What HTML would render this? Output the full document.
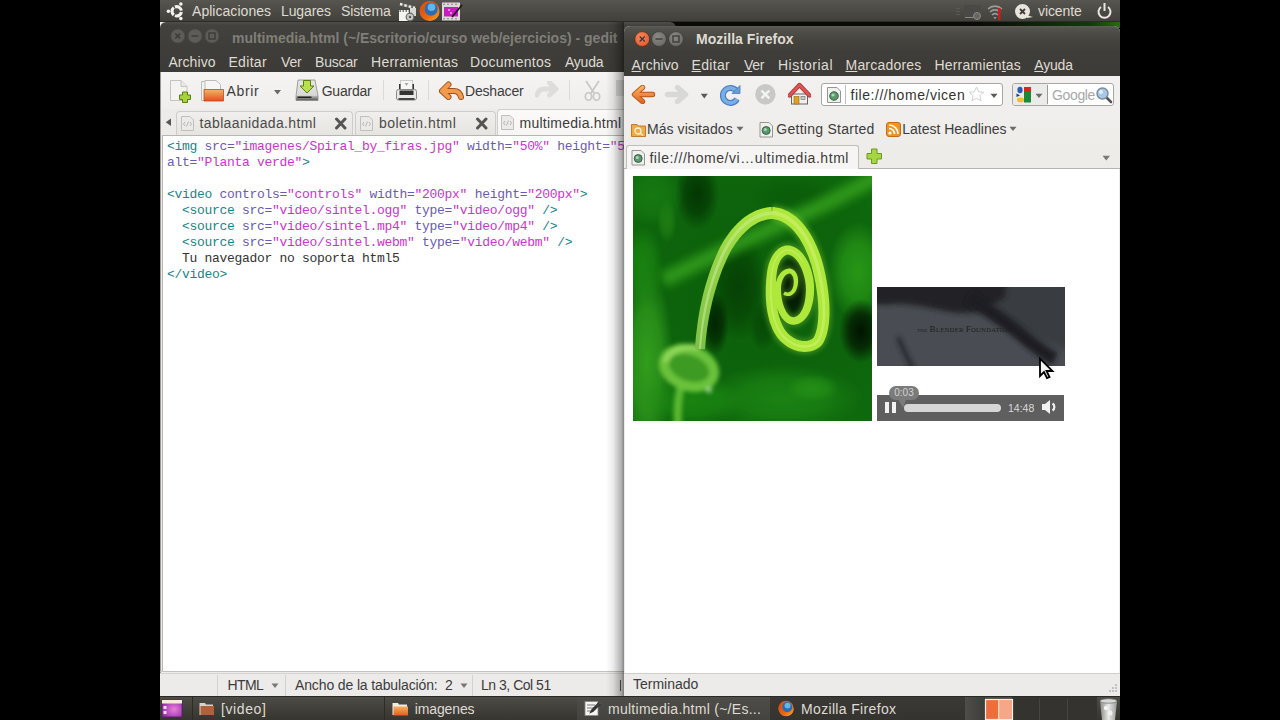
<!DOCTYPE html>
<html><head><meta charset="utf-8">
<style>
*{margin:0;padding:0;box-sizing:border-box}
html,body{width:1280px;height:720px;overflow:hidden;background:#000}
body{position:relative;font-family:"Liberation Sans",sans-serif}
.a{position:absolute}
.t{position:absolute;font-size:14px;line-height:14px;white-space:pre;font-family:"Liberation Sans",sans-serif}
.m{position:absolute;font-family:"Liberation Mono",monospace;font-size:13px;letter-spacing:-0.3px;line-height:16px;white-space:pre}
.mt{color:#dfdbd2}
.tg{color:#1a8486}
.at{color:#6a5bb0}
.st{color:#cc33cc}
.tx{color:#333}
u{text-decoration:underline;text-decoration-thickness:1px;text-underline-offset:0.5px}
</style></head><body>
<!-- desktop wallpaper strip -->
<div class="a" style="left:160px;top:22px;width:960px;height:6px;background:linear-gradient(90deg,#0a0a08 0,#0a0a08 85%,#123a0a 97%,#2a6a14)"></div>

<!-- TOP PANEL -->
<div class="a" style="left:160px;top:0;width:960px;height:22px;background:linear-gradient(#57554f,#403f3a)"></div>
<div class="a" style="left:160px;top:21px;width:960px;height:1px;background:#2c2b28"></div>
<svg class="a" style="left:162px;top:1px" width="26" height="21" viewBox="0 0 26 21">
<g fill="none" stroke="#f4f2ee" stroke-width="3.1"><path d="M11.81,14.00 A4.7,4.7 0 0 1 11.81,6.60"/><path d="M12.94,5.94 A4.7,4.7 0 0 1 19.35,9.65"/><path d="M19.35,10.95 A4.7,4.7 0 0 1 12.94,14.66"/></g>
<g fill="#f4f2ee"><circle cx="6.40" cy="10.30" r="1.75"/><circle cx="18.85" cy="3.11" r="1.75"/><circle cx="18.85" cy="17.49" r="1.75"/></g>
</svg>
<svg class="a" style="left:398px;top:2px" width="20" height="20" viewBox="0 0 20 20">
<path d="M2,2 L17,6" stroke="#6a6a66" stroke-width="3.2"/>
<path d="M2,2 L17,6" stroke="#f0f0e8" stroke-width="2.4" stroke-dasharray="2.5 2"/>
<rect x="1" y="8" width="10" height="11" fill="#f4f4f0"/>
<path d="M1.5,9 L11,9" stroke="#555" stroke-width="1.4" stroke-dasharray="1.5 1.5"/>
<rect x="12" y="6" width="6" height="8" fill="#d8d8d4"/>
<circle cx="12" cy="15" r="3.8" fill="#c8c8c4" stroke="#666" stroke-width="1.2"/>
<circle cx="12" cy="15" r="1.2" fill="#555"/>
</svg>
<svg class="a" style="left:418px;top:0px" width="23" height="22" viewBox="0 0 23 22">
<defs><linearGradient id="fxg" x1="0" y1="0" x2="1" y2="1"><stop offset="0" stop-color="#d84a0c"/><stop offset="0.6" stop-color="#ec6a10"/><stop offset="1" stop-color="#f4b028"/></linearGradient></defs>
<circle cx="11.5" cy="11" r="10" fill="url(#fxg)"/>
<circle cx="13" cy="9.2" r="6.6" fill="#2a6cb8"/>
<circle cx="13.5" cy="7.2" r="3.8" fill="#6cc4ec" opacity="0.85"/>
<path d="M2.5,6 C1.5,12 4,19 11.5,20.5 C17,21 21,17 21.5,12 C19.5,16 15,17.5 11,16 C7,14.5 5.5,10.5 7.5,6 C6,7 5,8 4.5,9.5 C4,8 3.5,7 2.5,6 Z" fill="url(#fxg)"/>
</svg>
<svg class="a" style="left:441px;top:2px" width="22" height="19" viewBox="0 0 22 19">
<rect x="1" y="0.5" width="18" height="18" fill="#dcdad6"/>
<g fill="#666"><circle cx="3" cy="2.3" r="0.7"/><circle cx="7" cy="2.3" r="0.7"/><circle cx="11" cy="2.3" r="0.7"/><circle cx="15" cy="2.3" r="0.7"/><circle cx="3" cy="16.7" r="0.7"/><circle cx="7" cy="16.7" r="0.7"/><circle cx="11" cy="16.7" r="0.7"/><circle cx="15" cy="16.7" r="0.7"/></g>
<rect x="3" y="5" width="14" height="9.5" fill="#c81cc0"/>
<circle cx="8" cy="8" r="1" fill="#f0a0f0"/><circle cx="10" cy="11" r="1" fill="#f0a0f0"/>
<path d="M21,3 L11,15" stroke="#1a1a1a" stroke-width="1.8"/>
</svg>
<svg class="a" style="left:955px;top:4px" width="28" height="16" viewBox="0 0 28 16">
<g fill="#5a5955"><rect x="1" y="4" width="4" height="1"/><rect x="1" y="7" width="4" height="1"/><rect x="1" y="10" width="4" height="1"/></g>
<rect x="9" y="1" width="17" height="12" fill="#4a4945"/>
<path d="M10,13.5 L19,13.5" stroke="#8a8985" stroke-width="1"/>
<circle cx="22" cy="12" r="3.5" fill="#666" stroke="#8a8985" stroke-width="1"/>
</svg>
<svg class="a" style="left:986px;top:4px" width="18" height="17" viewBox="0 0 18 17">
<g fill="none" stroke="#9c9b96" stroke-width="1.6">
<path d="M2,5 A10,10 0 0 1 16,5"/><path d="M4,8 A7,7 0 0 1 14,8"/><path d="M6,11 A4,4 0 0 1 12,11"/>
</g>
<path d="M7.5,13 L10.5,13 L9,15.5 Z" fill="#9c9b96"/>
<rect x="12" y="4" width="2.5" height="12" fill="#d21a1a"/>
</svg>
<svg class="a" style="left:1014px;top:3px" width="20" height="17" viewBox="0 0 20 17">
<circle cx="8.5" cy="8.5" r="7.5" fill="#e9e5dc"/>
<path d="M12,12 L19,14 L13,15 Z" fill="#e9e5dc"/>
<path d="M6,6 L11,11 M11,6 L6,11" stroke="#3c3b37" stroke-width="1.8"/>
</svg>
<svg class="a" style="left:1096px;top:2px" width="17" height="18" viewBox="0 0 17 18">
<path d="M5,5 A6,6 0 1 0 12,5" fill="none" stroke="#eae7e0" stroke-width="2"/>
<path d="M8.5,1 L8.5,9" stroke="#eae7e0" stroke-width="2"/>
</svg>
<!--PANEL_ICONS-->
<div class="t mt" style="left:192.0px;top:4px;letter-spacing:0.04px">Aplicaciones</div>
<div class="t mt" style="left:281.0px;top:4px;letter-spacing:-0.10px">Lugares</div>
<div class="t mt" style="left:341.0px;top:4px;letter-spacing:-0.13px">Sistema</div>
<div class="t mt" style="left:1038.0px;top:4px;letter-spacing:-0.10px">vicente</div>

<!-- GEDIT WINDOW -->
<div class="a" style="left:160px;top:22px;width:470px;height:675px;background:#edebe9"></div>
<div class="a" style="left:160px;top:22px;width:516px;height:50px;border-radius:6px 6px 0 0;background:linear-gradient(#4f4e4a 0,#43423e 3px,#3e3d39 26px,#3c3b37 50px)"></div>
<svg class="a" style="left:168px;top:27px" width="54" height="18" viewBox="0 0 54 18">
<g fill="#5d5c58" stroke="#4a4945" stroke-width="0.8"><circle cx="9.8" cy="9" r="7"/><circle cx="27" cy="9" r="7"/><circle cx="44" cy="9" r="7"/></g>
<g stroke="#3a3935" stroke-width="1.3" fill="none"><path d="M7.3,6.5 L12.3,11.5 M12.3,6.5 L7.3,11.5"/><path d="M23.5,9 L30.5,9"/><rect x="41" y="6" width="6" height="6"/></g>
</svg>
<!--GEDIT_BUTTONS-->
<div class="t" style="left:232.0px;top:30.5px;font-weight:bold;color:#7f7e79">multimedia.html (~/Escritorio/curso web/ejercicios) - gedit</div>
<div class="t mt" style="left:168.4px;top:55px;letter-spacing:0.07px">Archivo</div>
<div class="t mt" style="left:228.4px;top:55px;letter-spacing:0.34px">Editar</div>
<div class="t mt" style="left:281.0px;top:55px;letter-spacing:-0.18px">Ver</div>
<div class="t mt" style="left:315.0px;top:55px;letter-spacing:-0.18px">Buscar</div>
<div class="t mt" style="left:371.0px;top:55px;letter-spacing:0.27px">Herramientas</div>
<div class="t mt" style="left:470.0px;top:55px;letter-spacing:0.27px">Documentos</div>
<div class="t mt" style="left:565.0px;top:55px;letter-spacing:-0.23px">Ayuda</div>
<!-- toolbar -->
<div class="a" style="left:160px;top:72px;width:470px;height:37px;background:linear-gradient(#f5f4f2,#efeeec)"></div>
<svg class="a" style="left:168px;top:78px" width="26" height="26" viewBox="0 0 26 26">
<path d="M2.5,2.5 L13,2.5 L19,8.5 L19,22.5 L2.5,22.5 Z" fill="#f3f3f1" stroke="#c4c3c0" stroke-width="1"/>
<path d="M13,2.5 L13,8.5 L19,8.5" fill="#e8e8e6" stroke="#c4c3c0" stroke-width="1"/>
<path d="M14.5,14 L19.5,14 L19.5,17 L22.5,17 L22.5,21.5 L19.5,21.5 L19.5,24.5 L14.5,24.5 L14.5,21.5 L11.5,21.5 L11.5,17 L14.5,17 Z" fill="#a6d23c" stroke="#5c7c14" stroke-width="1"/>
</svg>
<svg class="a" style="left:200px;top:79px" width="26" height="24" viewBox="0 0 26 24">
<path d="M1.5,2.5 L15,2.5 L19,6.5 L19,21.5 L1.5,21.5 Z" fill="#f2f2f0" stroke="#bdbcb9"/>
<path d="M5,1.5 L16,1.5 L20.5,5.5 L20.5,12 L5,12 Z" fill="#f6f6f4" stroke="#bdbcb9"/>
<defs><linearGradient id="og" x1="0" y1="0" x2="0" y2="1"><stop offset="0" stop-color="#f2b46c"/><stop offset="1" stop-color="#e4501c"/></linearGradient></defs>
<path d="M4,10.5 L23.5,10.5 L23.5,22 L4,22 Z" fill="url(#og)" stroke="#c04a18" stroke-width="0.8"/>
</svg>
<svg class="a" style="left:273px;top:89px" width="10" height="7"><path d="M1,1 L8,1 L4.5,5.5 Z" fill="#6a6a68"/></svg>
<svg class="a" style="left:295px;top:79px" width="25" height="23" viewBox="0 0 25 23">
<defs><linearGradient id="sg" x1="0" y1="0" x2="0" y2="1"><stop offset="0" stop-color="#e6e6e4"/><stop offset="0.75" stop-color="#d8d8d6"/><stop offset="0.78" stop-color="#b8b8b6"/><stop offset="1" stop-color="#555"/></linearGradient></defs>
<path d="M3,1 L20,1 L23,17 L23,21.5 L1,21.5 L1,17 Z" fill="url(#sg)" stroke="#8a8a88" stroke-width="0.8"/>
<rect x="2.5" y="17.5" width="14" height="1.5" fill="#222"/>
<path d="M8.5,1.5 L15.5,1.5 L15.5,7 L19,7 L12,14 L5,7 L8.5,7 Z" fill="#b8e04c" stroke="#5c7c14" stroke-width="1"/>
</svg>
<svg class="a" style="left:395px;top:79px" width="24" height="23" viewBox="0 0 24 23">
<rect x="5.5" y="1.5" width="12" height="9" fill="#f6f6f4" stroke="#c8c8c6"/>
<path d="M9.5,4 L13.5,4 L11.5,7 Z" fill="#a8a8a6"/>
<rect x="4" y="5" width="1.5" height="6" fill="#333"/><rect x="17.5" y="5" width="1.5" height="6" fill="#333"/>
<rect x="1.5" y="10.5" width="20" height="10.5" rx="2" fill="#e8e8e6" stroke="#888886"/>
<rect x="4.5" y="11.5" width="14" height="4.5" fill="#333"/>
<rect x="3.5" y="19" width="16" height="2" fill="#444"/>
</svg>
<div class="a" style="left:383px;top:80px;width:1px;height:20px;background:#dcdad6"></div>
<div class="a" style="left:428px;top:80px;width:1px;height:20px;background:#dcdad6"></div>
<div class="a" style="left:569px;top:80px;width:1px;height:20px;background:#dcdad6"></div>
<svg class="a" style="left:439px;top:81px" width="25" height="19" viewBox="0 0 25 19">
<path d="M3,10 L9.5,3.5 M3,10 L9.5,16 M4,10 L15,10 C19,10 21,12 22,16" stroke="#a0501a" stroke-width="6" stroke-linecap="round" stroke-linejoin="round" fill="none"/>
<path d="M3,10 L9.5,3.5 M3,10 L9.5,16 M4,10 L15,10 C19,10 21,12 22,16" stroke="#f29a4c" stroke-width="4.2" stroke-linecap="round" stroke-linejoin="round" fill="none"/>
</svg>
<svg class="a" style="left:535px;top:81px" width="25" height="19" viewBox="0 0 25 19">
<path d="M21,8 L14.5,1.5 M21,8 L14.5,14 M20,8 L9,8 C5,8 3,10 2,14" stroke="#dedddb" stroke-width="5" stroke-linecap="round" stroke-linejoin="round" fill="none"/>
</svg>
<svg class="a" style="left:583px;top:80px" width="20" height="22" viewBox="0 0 20 22">
<g stroke="#c6c6c4" stroke-width="1.6" fill="none"><path d="M3,1 L11,13 M16,1 L8,13"/><ellipse cx="5.5" cy="16.5" rx="3.2" ry="3.8"/><ellipse cx="13.5" cy="16.5" rx="3.2" ry="3.8"/></g>
</svg>
<div class="a" style="left:616px;top:80px;width:8px;height:16px;background:#d8d8d6"></div>
<!--GEDIT_TOOLBAR-->
<div class="t" style="left:226.6px;top:84px;color:#3c3c3c;letter-spacing:0.63px">Abrir</div>
<div class="t" style="left:321.7px;top:84px;color:#3c3c3c;letter-spacing:-0.23px">Guardar</div>
<div class="t" style="left:465.0px;top:84px;color:#3c3c3c;letter-spacing:-0.18px">Deshacer</div>
<!-- tabs -->
<div class="a" style="left:160px;top:109px;width:470px;height:27px;background:#edebe9"></div>
<svg class="a" style="left:165px;top:118px" width="8" height="9"><path d="M6,0.5 L6,8 L0.8,4.2 Z" fill="#555"/></svg>
<div class="a" style="left:176px;top:111px;width:177px;height:25px;border:1px solid #cfcdc9;border-bottom:none;border-radius:4px 4px 0 0;background:linear-gradient(#f0efed,#e6e4e0)"></div>
<div class="a" style="left:355px;top:111px;width:141px;height:25px;border:1px solid #cfcdc9;border-bottom:none;border-radius:4px 4px 0 0;background:linear-gradient(#f0efed,#e6e4e0)"></div>
<div class="a" style="left:497px;top:109px;width:133px;height:28px;border:1px solid #cfcdc9;border-bottom:none;border-radius:4px 4px 0 0;background:linear-gradient(#fbfaf9,#f6f5f3)"></div>
<svg class="a" style="left:181px;top:116px" width="14" height="16" viewBox="0 0 14 16"><path d="M0.5,0.5 L9,0.5 L12.5,4 L12.5,14.5 L0.5,14.5 Z" fill="#eceae8" stroke="#c0bfbc"/><path d="M4,6 L2.5,8 L4,10 M9,6 L10.5,8 L9,10 M7.5,5.5 L5.5,10.5" stroke="#b0afac" stroke-width="0.9" fill="none"/></svg>
<svg class="a" style="left:360px;top:116px" width="14" height="16" viewBox="0 0 14 16"><path d="M0.5,0.5 L9,0.5 L12.5,4 L12.5,14.5 L0.5,14.5 Z" fill="#eceae8" stroke="#c0bfbc"/><path d="M4,6 L2.5,8 L4,10 M9,6 L10.5,8 L9,10 M7.5,5.5 L5.5,10.5" stroke="#b0afac" stroke-width="0.9" fill="none"/></svg>
<svg class="a" style="left:501px;top:115px" width="14" height="16" viewBox="0 0 14 16"><path d="M0.5,0.5 L9,0.5 L12.5,4 L12.5,14.5 L0.5,14.5 Z" fill="#eceae8" stroke="#c0bfbc"/><path d="M4,6 L2.5,8 L4,10 M9,6 L10.5,8 L9,10 M7.5,5.5 L5.5,10.5" stroke="#b0afac" stroke-width="0.9" fill="none"/></svg>
<svg class="a" style="left:334px;top:117px" width="14" height="13" viewBox="0 0 14 13"><path d="M2.5,2 L11,11 M11,2 L2.5,11" stroke="#565553" stroke-width="3" stroke-linecap="round"/></svg>
<svg class="a" style="left:475px;top:117px" width="14" height="13" viewBox="0 0 14 13"><path d="M2.5,2 L11,11 M11,2 L2.5,11" stroke="#565553" stroke-width="3" stroke-linecap="round"/></svg>
<!--GEDIT_TABS-->
<div class="t" style="left:199.6px;top:116px;color:#4a4a4a;letter-spacing:0.36px">tablaanidada.html</div>
<div class="t" style="left:379.0px;top:116px;color:#4a4a4a;letter-spacing:0.47px">boletin.html</div>
<div class="t" style="left:519.5px;top:116px;color:#3a3a3a;letter-spacing:0.25px">multimedia.html</div>
<!-- editor -->
<div class="a" style="left:162px;top:135px;width:468px;height:537px;background:#fff;border:1px solid #b8b6b2"></div>
<div class="a" style="left:160px;top:72px;width:1px;height:625px;background:#9a9894"></div>
<div class="m" style="left:167px;top:138.5px"><span class="tg">&lt;img</span> <span class="at">src=</span><span class="st">"imagenes/Spiral_by_firas.jpg"</span> <span class="at">width=</span><span class="st">"50%"</span> <span class="at">height=</span><span class="st">"50%"</span>
<span class="at">alt=</span><span class="st">"Planta verde"</span><span class="tg">&gt;</span>

<span class="tg">&lt;video</span> <span class="at">controls=</span><span class="st">"controls"</span> <span class="at">width=</span><span class="st">"200px"</span> <span class="at">height=</span><span class="st">"200px"</span><span class="tg">&gt;</span>
  <span class="tg">&lt;source</span> <span class="at">src=</span><span class="st">"video/sintel.ogg"</span> <span class="at">type=</span><span class="st">"video/ogg"</span> <span class="tg">/&gt;</span>
  <span class="tg">&lt;source</span> <span class="at">src=</span><span class="st">"video/sintel.mp4"</span> <span class="at">type=</span><span class="st">"video/mp4"</span> <span class="tg">/&gt;</span>
  <span class="tg">&lt;source</span> <span class="at">src=</span><span class="st">"video/sintel.webm"</span> <span class="at">type=</span><span class="st">"video/webm"</span> <span class="tg">/&gt;</span>
<span class="tx">  Tu navegador no soporta html5</span>
<span class="tg">&lt;/video&gt;</span></div>
<!-- status bar -->
<div class="a" style="left:160px;top:673px;width:470px;height:24px;background:#edebe9;border-top:1px solid #d6d4d0"></div>
<div class="a" style="left:160px;top:671px;width:464px;height:1px;background:#c4c2be"></div>
<div class="a" style="left:217px;top:675px;width:1px;height:21px;background:#d4d2ce"></div>
<div class="a" style="left:285px;top:675px;width:1px;height:21px;background:#d4d2ce"></div>
<div class="a" style="left:472px;top:675px;width:1px;height:21px;background:#d4d2ce"></div>
<div class="a" style="left:620px;top:680px;width:1px;height:11px;background:#555"></div>
<svg class="a" style="left:271px;top:683px" width="8" height="6"><path d="M0.5,0.5 L7.5,0.5 L4,5 Z" fill="#777"/></svg>
<svg class="a" style="left:460px;top:683px" width="8" height="6"><path d="M0.5,0.5 L7.5,0.5 L4,5 Z" fill="#777"/></svg>
<!--GEDIT_STATUS-->
<div class="t" style="left:227.5px;top:678px;color:#3c3c3c;letter-spacing:-0.61px">HTML</div>
<div class="t" style="left:295.0px;top:678px;color:#3c3c3c;letter-spacing:-0.13px">Ancho de la tabulación:  2</div>
<div class="t" style="left:481.0px;top:678px;color:#3c3c3c;letter-spacing:-0.48px">Ln 3, Col 51</div>

<div class="a" style="left:606px;top:22px;width:18px;height:675px;background:linear-gradient(90deg,rgba(0,0,0,0),rgba(0,0,0,0.08) 40%,rgba(0,0,0,0.3) 85%,rgba(0,0,0,0.48))"></div>
<!-- FIREFOX WINDOW -->
<div class="a" style="left:624px;top:26px;width:496px;height:671px;background:#edebe9;border-radius:6px 6px 0 0;overflow:hidden">
  <div class="a" style="left:0;top:0;width:496px;height:50px;background:linear-gradient(#5d5c58 0,#52514c 3px,#45443f 14px,#3e3d39 26px,#3c3b37 50px)"></div>
</div>
<svg class="a" style="left:633px;top:30px" width="54" height="18" viewBox="0 0 54 18">
<defs><radialGradient id="cg" cx="0.4" cy="0.35" r="0.7"><stop offset="0" stop-color="#f6875a"/><stop offset="1" stop-color="#e8592a"/></radialGradient>
<radialGradient id="gg" cx="0.4" cy="0.35" r="0.7"><stop offset="0" stop-color="#8a8985"/><stop offset="1" stop-color="#6a6965"/></radialGradient></defs>
<circle cx="9.2" cy="9" r="7.4" fill="url(#cg)" stroke="#3a2a22" stroke-width="0.6"/>
<circle cx="26" cy="9" r="7.4" fill="url(#gg)" stroke="#333" stroke-width="0.6"/>
<circle cx="43" cy="9" r="7.4" fill="url(#gg)" stroke="#333" stroke-width="0.6"/>
<g stroke="#3a3935" stroke-width="1.3" fill="none"><path d="M6.7,6.5 L11.7,11.5 M11.7,6.5 L6.7,11.5"/><path d="M22.5,9 L29.5,9"/><rect x="40" y="6" width="6" height="6"/></g>
</svg>
<!--FF_BUTTONS-->
<div class="t" style="left:696.0px;top:32px;font-weight:bold;color:#dfdbd2;letter-spacing:0.03px">Mozilla Firefox</div>
<div class="t mt" style="left:631.5px;top:58px;letter-spacing:0.07px"><u>A</u>rchivo</div>
<div class="t mt" style="left:691.5px;top:58px;letter-spacing:0.32px"><u>E</u>ditar</div>
<div class="t mt" style="left:744.0px;top:58px;letter-spacing:-0.33px"><u>V</u>er</div>
<div class="t mt" style="left:778.0px;top:58px;letter-spacing:0.49px">Hi<u>s</u>torial</div>
<div class="t mt" style="left:845.5px;top:58px;letter-spacing:0.21px"><u>M</u>arcadores</div>
<div class="t mt" style="left:934.4px;top:58px;letter-spacing:0.22px">Herramien<u>t</u>as</div>
<div class="t mt" style="left:1034.3px;top:58px;letter-spacing:-0.19px"><u>A</u>yuda</div>
<!-- nav toolbar -->
<div class="a" style="left:624px;top:76px;width:496px;height:94px;background:linear-gradient(#f2f1ef,#ecebe8)"></div>
<!--FF_NAV-->
<div class="a" style="left:821px;top:83px;width:182px;height:23px;background:#fff;border:1px solid #a8a6a2;border-radius:3px"></div>
<div class="t" style="left:850.5px;top:88px;color:#333;letter-spacing:0.54px">file:///home/vicen</div>
<div class="a" style="left:1012px;top:83px;width:102px;height:23px;background:#fff;border:1px solid #a8a6a2;border-radius:3px"></div>
<div class="t" style="left:1052.0px;top:88px;color:#a8a8a8;letter-spacing:-0.35px">Google</div>
<!-- bookmarks -->
<div class="t" style="left:647.0px;top:122px;color:#3c3c3c;letter-spacing:0.07px">Más visitados</div>
<div class="t" style="left:776.3px;top:122px;color:#3c3c3c;letter-spacing:0.27px">Getting Started</div>
<div class="t" style="left:902.2px;top:122px;color:#3c3c3c">Latest Headlines</div>
<!-- tab -->
<div class="a" style="left:624px;top:168px;width:496px;height:1px;background:#b6b4b0"></div>
<div class="a" style="left:626px;top:145px;width:233px;height:25px;background:#f6f5f3;border:1px solid #c0beba;border-bottom:none;border-radius:3px 3px 0 0"></div>
<div class="t" style="left:649.4px;top:151px;color:#3c3c3c;letter-spacing:0.56px">file:///home/vi…ultimedia.html</div>
<svg class="a" style="left:630.5px;top:85px" width="26" height="19" viewBox="0 0 26 19">
<defs><linearGradient id="bk" x1="0" y1="0" x2="0" y2="1"><stop offset="0" stop-color="#f6b060"/><stop offset="1" stop-color="#e46a26"/></linearGradient></defs>
<path d="M11.5,2.5 L3.5,9.5 L11.5,16.5 M4,9.5 L21.5,9.5" stroke="#b4561e" stroke-width="5.4" stroke-linecap="round" stroke-linejoin="round" fill="none"/>
<path d="M11.5,2.5 L3.5,9.5 L11.5,16.5 M4,9.5 L21.5,9.5" stroke="url(#bk)" stroke-width="3.6" stroke-linecap="round" stroke-linejoin="round" fill="none"/>
</svg>
<svg class="a" style="left:663px;top:85px" width="26" height="19" viewBox="0 0 26 19">
<path d="M14.5,2.5 L22.5,9.5 L14.5,16.5 M22,9.5 L4.5,9.5" stroke="#d8d8d6" stroke-width="5.4" stroke-linecap="round" stroke-linejoin="round" fill="none"/>
</svg>
<svg class="a" style="left:700px;top:93px" width="9" height="7"><path d="M0.8,0.8 L7.8,0.8 L4.3,5.5 Z" fill="#5a5a58"/></svg>
<svg class="a" style="left:720px;top:84px" width="22" height="22" viewBox="0 0 22 22">
<path d="M16.5,7 A7.5,7.5 0 1 0 17,15" stroke="#4a7cc0" stroke-width="6" fill="none"/>
<path d="M16.5,7 A7.5,7.5 0 1 0 17,15" stroke="#7aaee6" stroke-width="3.6" fill="none"/>
<path d="M12,9.5 L20,9.5 L20,1.5 Z" fill="#6a9ed8" stroke="#4a7cc0" stroke-width="0.8"/>
</svg>
<svg class="a" style="left:754px;top:83px" width="23" height="23" viewBox="0 0 23 23">
<circle cx="11.4" cy="11.3" r="10.2" fill="#c8c8c6"/>
<path d="M7.5,7.5 L15.3,15.3 M15.3,7.5 L7.5,15.3" stroke="#f4f4f2" stroke-width="2.4"/>
</svg>
<svg class="a" style="left:788px;top:82px" width="23" height="24" viewBox="0 0 23 24">
<rect x="3.5" y="12" width="16" height="10" fill="#f0f0ee" stroke="#666" stroke-width="1"/>
<rect x="6" y="14.5" width="5" height="7.5" fill="#e0a020" stroke="#9a6a10" stroke-width="0.6"/>
<rect x="13" y="14.5" width="4" height="3" fill="#c0d0d8" stroke="#666" stroke-width="0.6"/>
<path d="M1.5,13.5 L11.5,3 L21.5,13.5" stroke="#a83232" stroke-width="4.4" stroke-linejoin="round" stroke-linecap="round" fill="none"/>
<path d="M1.5,13.5 L11.5,3 L21.5,13.5" stroke="#dc5454" stroke-width="2.8" stroke-linejoin="round" stroke-linecap="round" fill="none"/>
</svg>
<svg class="a" style="left:826px;top:87px" width="17" height="17" viewBox="0 0 17 17">
<path d="M1.5,0.5 L11,0.5 L14.5,4 L14.5,15.5 L1.5,15.5 Z" fill="#f0f0ee" stroke="#8a8a88" stroke-width="0.9"/>
<circle cx="8" cy="9" r="4.3" fill="#5a9a6a" stroke="#2a4a3a" stroke-width="0.8"/>
<circle cx="7" cy="8" r="1.6" fill="#a8d8b8"/>
</svg>
<div class="a" style="left:845px;top:85px;width:1px;height:19px;background:#c0bfbc"></div>
<svg class="a" style="left:968px;top:86px" width="17" height="16" viewBox="0 0 17 16"><path d="M8.5,1 L10.7,5.8 L15.8,6.3 L11.9,9.7 L13.1,14.8 L8.5,12.2 L3.9,14.8 L5.1,9.7 L1.2,6.3 L6.3,5.8 Z" fill="#fff" stroke="#d0d0ce" stroke-width="1"/></svg>
<svg class="a" style="left:990px;top:93px" width="9" height="7"><path d="M0.5,0.8 L7.5,0.8 L4,5 Z" fill="#5a5a58"/></svg>
<div class="a" style="left:1013px;top:84px;width:35px;height:21px;background:#ebebe9;border-radius:2px 0 0 2px"></div>
<div class="a" style="left:1047px;top:85px;width:1px;height:19px;background:#9a9996"></div>
<svg class="a" style="left:1015px;top:86px" width="18" height="18" viewBox="0 0 18 18">
<ellipse cx="5" cy="4" rx="2.6" ry="3.2" fill="#2a5ab8"/>
<path d="M1.5,7.5 L5,9.5 L1.5,11 Z" fill="#1a3a7a"/>
<ellipse cx="5.5" cy="14" rx="3.6" ry="2.4" fill="#f0c030"/>
<rect x="9" y="1" width="7" height="6" fill="#d42a1a"/>
<rect x="9" y="6" width="7" height="10.5" fill="#1a8a3a"/>
</svg>
<svg class="a" style="left:1035px;top:93px" width="9" height="7"><path d="M0.5,0.8 L7.5,0.8 L4,5 Z" fill="#6a6a68"/></svg>
<svg class="a" style="left:1095px;top:86px" width="18" height="18" viewBox="0 0 18 18">
<path d="M11.5,11.5 L16,16" stroke="#555" stroke-width="2.6" stroke-linecap="round"/>
<circle cx="7.5" cy="7.5" r="5.5" fill="#a8c8e8" stroke="#7a8a9a" stroke-width="1.4"/>
<circle cx="6" cy="6" r="2" fill="#e0f0ff"/>
</svg>
<!-- bookmark icons -->
<svg class="a" style="left:631px;top:122px" width="16" height="16" viewBox="0 0 16 16">
<path d="M0.5,2.5 L6,2.5 L7,4 L14.5,4 L14.5,14.5 L0.5,14.5 Z" fill="#f0a848" stroke="#c07020" stroke-width="0.9"/>
<circle cx="7" cy="9" r="3" fill="none" stroke="#fff4d0" stroke-width="1.3"/><path d="M9,11 L12,13.5" stroke="#fff4d0" stroke-width="1.4"/>
</svg>
<svg class="a" style="left:759px;top:122px" width="15" height="16" viewBox="0 0 15 16">
<path d="M1,0.5 L10,0.5 L13.5,4 L13.5,15 L1,15 Z" fill="#f0f0ee" stroke="#8a8a88" stroke-width="0.9"/>
<circle cx="7.2" cy="8.5" r="4" fill="#5a9a6a" stroke="#2a4a3a" stroke-width="0.8"/>
<circle cx="6.3" cy="7.5" r="1.5" fill="#a8d8b8"/>
</svg>
<svg class="a" style="left:886px;top:122px" width="15" height="15" viewBox="0 0 15 15">
<rect x="0.5" y="0.5" width="14" height="14" rx="2.5" fill="#f29422" stroke="#c86a10"/>
<circle cx="4" cy="11" r="1.6" fill="#fff"/>
<path d="M3,6.5 A5.5,5.5 0 0 1 8.5,12 M3,3 A9,9 0 0 1 12,12" stroke="#fff" stroke-width="1.7" fill="none"/>
</svg>
<svg class="a" style="left:736px;top:126px" width="9" height="7"><path d="M0.5,0.8 L7.5,0.8 L4,5 Z" fill="#6a6a68"/></svg>
<svg class="a" style="left:1009px;top:126px" width="9" height="7"><path d="M0.5,0.8 L7.5,0.8 L4,5 Z" fill="#6a6a68"/></svg>
<!-- tab icons -->
<svg class="a" style="left:631px;top:150px" width="15" height="16" viewBox="0 0 15 16">
<path d="M1,0.5 L10,0.5 L13.5,4 L13.5,15 L1,15 Z" fill="#f0f0ee" stroke="#8a8a88" stroke-width="0.9"/>
<circle cx="7.2" cy="8.5" r="4" fill="#5a9a6a" stroke="#2a4a3a" stroke-width="0.8"/>
<circle cx="6.3" cy="7.5" r="1.5" fill="#a8d8b8"/>
</svg>
<svg class="a" style="left:866px;top:148px" width="17" height="17" viewBox="0 0 17 17">
<path d="M5.5,1 L11,1 L11,5.5 L15.5,5.5 L15.5,11 L11,11 L11,15.5 L5.5,15.5 L5.5,11 L1,11 L1,5.5 L5.5,5.5 Z" fill="#a6d640" stroke="#6a9a20" stroke-width="1"/>
</svg>
<svg class="a" style="left:1102px;top:155px" width="9" height="7"><path d="M0.5,0.8 L8,0.8 L4.25,5.5 Z" fill="#7a7a78"/></svg>
<!-- content -->
<div class="a" style="left:625px;top:169px;width:494px;height:504px;background:#fff"></div>
<svg class="a" style="left:633px;top:176px" width="239" height="245" viewBox="0 0 239 245">
<defs><radialGradient id="g0"><stop offset="0" stop-color="#0c600a" stop-opacity="1.0"/><stop offset="0.55" stop-color="#0c600a" stop-opacity="0.70"/><stop offset="1" stop-color="#0c600a" stop-opacity="0"/></radialGradient><radialGradient id="g1"><stop offset="0" stop-color="#34a01e" stop-opacity="0.95"/><stop offset="0.55" stop-color="#34a01e" stop-opacity="0.66"/><stop offset="1" stop-color="#34a01e" stop-opacity="0"/></radialGradient><radialGradient id="g2"><stop offset="0" stop-color="#1c8a12" stop-opacity="0.8"/><stop offset="0.55" stop-color="#1c8a12" stop-opacity="0.56"/><stop offset="1" stop-color="#1c8a12" stop-opacity="0"/></radialGradient><radialGradient id="g3"><stop offset="0" stop-color="#033403" stop-opacity="0.95"/><stop offset="0.55" stop-color="#033403" stop-opacity="0.66"/><stop offset="1" stop-color="#033403" stop-opacity="0"/></radialGradient><radialGradient id="g4"><stop offset="0" stop-color="#2a8c18" stop-opacity="0.6"/><stop offset="0.55" stop-color="#2a8c18" stop-opacity="0.42"/><stop offset="1" stop-color="#2a8c18" stop-opacity="0"/></radialGradient><radialGradient id="g5"><stop offset="0" stop-color="#053e04" stop-opacity="0.9"/><stop offset="0.55" stop-color="#053e04" stop-opacity="0.63"/><stop offset="1" stop-color="#053e04" stop-opacity="0"/></radialGradient><radialGradient id="g6"><stop offset="0" stop-color="#012001" stop-opacity="0.95"/><stop offset="0.55" stop-color="#012001" stop-opacity="0.66"/><stop offset="1" stop-color="#012001" stop-opacity="0"/></radialGradient><radialGradient id="g7"><stop offset="0" stop-color="#2a9c18" stop-opacity="0.9"/><stop offset="0.55" stop-color="#2a9c18" stop-opacity="0.63"/><stop offset="1" stop-color="#2a9c18" stop-opacity="0"/></radialGradient><radialGradient id="g8"><stop offset="0" stop-color="#0a5a08" stop-opacity="0.7"/><stop offset="0.55" stop-color="#0a5a08" stop-opacity="0.49"/><stop offset="1" stop-color="#0a5a08" stop-opacity="0"/></radialGradient><radialGradient id="g9"><stop offset="0" stop-color="#011401" stop-opacity="1.0"/><stop offset="0.55" stop-color="#011401" stop-opacity="0.70"/><stop offset="1" stop-color="#011401" stop-opacity="0"/></radialGradient><radialGradient id="g10"><stop offset="0" stop-color="#010e01" stop-opacity="1.0"/><stop offset="0.55" stop-color="#010e01" stop-opacity="0.70"/><stop offset="1" stop-color="#010e01" stop-opacity="0"/></radialGradient><radialGradient id="g11"><stop offset="0" stop-color="#1c8614" stop-opacity="0.9"/><stop offset="0.55" stop-color="#1c8614" stop-opacity="0.63"/><stop offset="1" stop-color="#1c8614" stop-opacity="0"/></radialGradient><radialGradient id="g12"><stop offset="0" stop-color="#2a9a1a" stop-opacity="0.6"/><stop offset="0.55" stop-color="#2a9a1a" stop-opacity="0.42"/><stop offset="1" stop-color="#2a9a1a" stop-opacity="0"/></radialGradient><radialGradient id="g13"><stop offset="0" stop-color="#1c8c12" stop-opacity="0.8"/><stop offset="0.55" stop-color="#1c8c12" stop-opacity="0.56"/><stop offset="1" stop-color="#1c8c12" stop-opacity="0"/></radialGradient><radialGradient id="g14"><stop offset="0" stop-color="#054405" stop-opacity="0.8"/><stop offset="0.55" stop-color="#054405" stop-opacity="0.56"/><stop offset="1" stop-color="#054405" stop-opacity="0"/></radialGradient><radialGradient id="g15"><stop offset="0" stop-color="#1a8012" stop-opacity="0.7"/><stop offset="0.55" stop-color="#1a8012" stop-opacity="0.49"/><stop offset="1" stop-color="#1a8012" stop-opacity="0"/></radialGradient>
<linearGradient id="stg" gradientUnits="userSpaceOnUse" x1="0" y1="175" x2="0" y2="35"><stop offset="0" stop-color="#7cbe48"/><stop offset="0.7" stop-color="#98d448"/><stop offset="1" stop-color="#ade83a"/></linearGradient>
<filter id="sb5" x="-50%" y="-50%" width="200%" height="200%"><feGaussianBlur stdDeviation="5"/></filter>
<filter id="sb2" x="-50%" y="-50%" width="200%" height="200%"><feGaussianBlur stdDeviation="2"/></filter>
<filter id="sb1" x="-20%" y="-20%" width="140%" height="140%"><feGaussianBlur stdDeviation="0.5"/></filter>
<clipPath id="ic"><rect width="239" height="245"/></clipPath>
</defs>
<g clip-path="url(#ic)">
<rect width="239" height="245" fill="#107010"/>
<ellipse cx="120" cy="120" rx="220" ry="220" fill="url(#g0)"/><ellipse cx="14" cy="185" rx="26" ry="95" fill="url(#g1)"/><ellipse cx="10" cy="90" rx="20" ry="40" fill="url(#g2)"/><ellipse cx="64" cy="18" rx="22" ry="36" fill="url(#g3)"/><ellipse cx="34" cy="45" rx="10" ry="22" fill="url(#g4)"/><ellipse cx="105" cy="110" rx="30" ry="55" fill="url(#g5)"/><ellipse cx="82" cy="148" rx="14" ry="32" fill="url(#g6)"/><ellipse cx="225" cy="95" rx="30" ry="50" fill="url(#g7)"/><ellipse cx="160" cy="20" rx="45" ry="20" fill="url(#g8)"/><ellipse cx="228" cy="155" rx="22" ry="32" fill="url(#g9)"/><ellipse cx="160" cy="112" rx="24" ry="40" fill="url(#g10)"/><ellipse cx="150" cy="222" rx="80" ry="34" fill="url(#g11)"/><ellipse cx="180" cy="212" rx="26" ry="14" fill="url(#g12)"/><ellipse cx="60" cy="225" rx="50" ry="25" fill="url(#g13)"/><ellipse cx="130" cy="150" rx="14" ry="25" fill="url(#g14)"/><ellipse cx="20" cy="20" rx="30" ry="30" fill="url(#g15)"/>
<path d="M30,104 C45,97 62,88 86,77 C120,60 150,47 175,36 C200,25 222,12 250,-2" stroke="#36a01c" stroke-width="15" fill="none" filter="url(#sb5)" opacity="0.85"/>
<g filter="url(#sb2)">
 <path d="M45,250 C44,235 45,220 49,206" stroke="#5cb832" stroke-width="8" fill="none"/>
 <ellipse cx="56" cy="192" rx="26" ry="18" stroke="#6ac23a" stroke-width="10" fill="#3c9a24" transform="rotate(20 56 192)"/>
 <path d="M32,186 C36,174 52,168 66,172" stroke="#9ade60" stroke-width="6" fill="none" opacity="0.8"/>
 <circle cx="76" cy="214" r="3" fill="#c8f0b0" opacity="0.7"/>
</g>
<path d="M138.4,45.5 L139.7,45.6 L140.7,45.7 L141.8,45.9 L142.9,46.1 L143.9,46.4 L144.9,46.7 L146.0,47.1 L147.0,47.5 L148.1,48.0 L149.1,48.5 L150.1,49.1 L151.1,49.8 L152.2,50.5 L153.2,51.3 L154.2,52.1 L155.2,53.0 L156.3,53.9 L157.3,54.9 L158.3,56.0 L159.3,57.1 L160.2,58.3 L161.2,59.5 L162.2,60.8 L163.1,62.1 L164.1,63.5 L165.0,65.0 L165.9,66.5 L166.8,68.0 L167.7,69.6 L168.6,71.3 L169.4,73.0 L170.2,74.7 L171.0,76.5 L171.8,78.4 L172.6,80.3 L173.3,82.2 L174.1,84.2 L174.8,86.2 L175.4,88.3 L176.1,90.3 L176.6,92.3 L177.2,94.5 L177.7,96.7 L178.2,98.8 L178.7,101.0 L179.1,103.2 L179.6,105.4 L180.0,107.5 L180.4,109.7 L180.7,111.8 L181.1,114.0 L181.4,116.1 L181.6,118.2 L181.9,120.3 L182.1,122.4 L182.3,124.4 L182.5,126.4 L182.6,128.4 L182.7,130.4 L182.8,132.3 L182.8,134.3 L182.9,136.1 L182.8,137.9 L182.8,139.7 L182.7,141.5 L182.6,143.2 L182.5,144.8 L182.3,146.5 L182.1,148.0 L181.9,149.5 L181.6,150.9 L181.3,152.3 L181.0,153.6 L180.7,154.9 L180.3,156.1 L179.9,157.2 L179.5,158.2 L179.1,159.2 L178.6,160.1 L178.4,160.5 L178.8,160.0 L178.5,160.3 L178.2,160.5 L177.9,160.7 L177.6,161.0 L177.3,161.2 L176.9,161.4 L176.5,161.6 L176.1,161.8 L175.7,161.9 L175.2,162.1 L174.7,162.2 L174.2,162.3 L173.7,162.4 L173.2,162.5 L172.6,162.5 L172.0,162.6 L171.4,162.6 L170.8,162.6 L170.1,162.5 L169.5,162.4 L168.8,162.3 L168.2,162.2 L167.5,162.0 L166.8,161.9 L166.1,161.6 L165.3,161.4 L164.6,161.1 L163.9,160.8 L163.2,160.4 L162.4,160.0 L161.7,159.6 L160.9,159.1 L160.2,158.6 L159.4,158.1 L158.7,157.5 L158.0,156.8 L157.2,156.2 L156.5,155.5 L155.9,154.8 L155.3,154.1 L154.6,153.2 L154.0,152.3 L153.4,151.4 L152.8,150.3 L152.2,149.3 L151.6,148.1 L151.1,147.0 L150.6,145.7 L150.1,144.5 L149.6,143.2 L149.2,141.8 L148.8,140.5 L148.4,139.0 L148.0,137.6 L147.6,136.1 L147.3,134.6 L147.0,133.1 L146.7,131.5 L146.5,129.9 L146.2,128.3 L146.0,126.7 L145.8,125.1 L145.7,123.4 L145.6,121.8 L145.5,120.1 L145.4,118.4 L145.3,116.7 L145.3,115.1 L145.3,113.4 L145.3,111.7 L145.3,110.0 L145.3,108.3 L145.4,106.7 L145.5,105.0 L145.6,103.4 L145.8,101.8 L145.9,100.1 L146.1,98.6 L146.3,97.0 L146.4,96.1 L146.5,95.3 L146.7,94.4 L146.9,93.6 L147.0,92.8 L147.2,92.1 L147.4,91.3 L147.7,90.6 L147.9,89.9 L148.1,89.3 L148.4,88.6 L148.6,88.0 L148.9,87.4 L149.1,86.9 L149.4,86.3 L149.7,85.8 L150.0,85.4 L150.3,84.9 L150.5,84.5 L150.8,84.1 L151.1,83.8 L151.4,83.4 L151.7,83.1 L151.9,82.8 L152.2,82.6 L152.5,82.3 L152.7,82.1 L152.9,81.9 L153.2,81.8 L153.4,81.6 L153.6,81.5 L153.8,81.4 L154.0,81.3 L154.2,81.2 L154.3,81.2 L154.5,81.1 L154.6,81.1 L154.8,81.1 L154.9,81.1 L154.5,81.1 L154.9,81.1 L155.3,81.2 L155.8,81.3 L156.2,81.4 L156.7,81.6 L157.2,81.9 L157.7,82.1 L158.2,82.5 L158.7,82.9 L159.3,83.3 L159.8,83.8 L160.4,84.4 L161.0,85.0 L161.5,85.7 L162.1,86.4 L162.7,87.2 L163.2,88.0 L163.7,88.8 L164.3,89.7 L164.8,90.7 L165.3,91.6 L165.7,92.6 L166.2,93.6 L166.6,94.7 L167.1,95.8 L167.5,96.9 L167.8,98.0 L168.2,99.1 L168.5,100.3 L168.8,101.4 L169.1,102.6 L169.4,103.8 L169.6,105.0 L169.8,106.1 L170.0,107.3 L170.1,108.5 L170.2,109.6 L170.3,110.8 L170.3,111.9 L170.4,113.0 L170.4,114.3 L170.4,115.6 L170.3,116.8 L170.2,118.0 L170.1,119.2 L170.0,120.4 L169.9,121.5 L169.7,122.6 L169.6,123.6 L169.4,124.7 L169.2,125.7 L168.9,126.7 L168.7,127.6 L168.4,128.5 L168.2,129.4 L167.9,130.2 L167.6,131.0 L167.3,131.7 L166.9,132.4 L166.6,133.1 L166.3,133.7 L165.9,134.3 L165.6,134.9 L165.2,135.4 L164.8,135.8 L164.5,136.3 L164.1,136.7 L163.8,137.0 L163.5,137.3 L163.1,137.6 L162.8,137.8 L162.5,138.0 L162.2,138.2 L161.9,138.3 L161.6,138.4 L161.3,138.5 L161.0,138.6 L160.7,138.7 L160.3,138.7 L160.3,138.7 L160.4,138.7 L160.1,138.7 L159.8,138.6 L159.6,138.5 L159.3,138.4 L159.0,138.3 L158.7,138.1 L158.4,137.9 L158.1,137.6 L157.7,137.4 L157.4,137.0 L157.0,136.6 L156.7,136.2 L156.3,135.7 L156.0,135.2 L155.6,134.7 L155.2,134.1 L154.9,133.4 L154.5,132.8 L154.2,132.0 L153.9,131.3 L153.6,130.5 L153.3,129.8 L153.0,128.9 L152.7,128.1 L152.5,127.2 L152.2,126.3 L152.0,125.4 L151.8,124.5 L151.6,123.6 L151.4,122.7 L151.2,121.7 L151.1,120.7 L150.9,119.8 L150.8,118.8 L150.7,117.9 L150.6,116.9 L150.6,115.9 L150.5,115.0 L150.5,114.0 L150.5,113.3 L150.5,112.6 L150.5,112.0 L150.6,111.3 L150.6,110.7 L150.7,110.0 L150.7,109.4 L150.8,108.8 L150.9,108.3 L151.1,107.7 L151.2,107.1 L151.3,106.6 L151.5,106.1 L151.6,105.6 L151.8,105.2 L152.0,104.7 L152.2,104.3 L152.4,103.9 L152.6,103.5 L152.8,103.1 L153.0,102.8 L153.2,102.5 L153.4,102.2 L153.6,101.9 L153.8,101.7 L154.0,101.4 L154.3,101.2 L154.5,101.0 L154.7,100.9 L154.9,100.7 L155.1,100.6 L155.3,100.5 L155.5,100.3 L155.7,100.3 L155.9,100.2 L156.1,100.1 L156.3,100.1 L156.5,100.0 L156.8,100.0 L156.3,99.9 L155.8,99.8 L156.0,99.9 L156.1,99.9 L156.2,100.0 L156.3,100.1 L156.5,100.1 L156.6,100.2 L156.7,100.4 L156.8,100.5 L157.0,100.7 L157.1,100.9 L157.2,101.1 L157.3,101.3 L157.5,101.6 L157.6,101.9 L157.7,102.2 L157.8,102.5 L157.9,102.9 L158.0,103.2 L158.0,103.6 L158.1,104.0 L158.2,104.5 L158.2,104.9 L158.2,105.3 L158.2,105.8 L158.2,106.2 L158.2,106.7 L158.2,107.1 L158.1,107.6 L158.1,108.0 L158.0,108.5 L157.9,108.9 L157.8,109.4 L157.7,109.8 L157.6,110.2 L157.5,110.6 L157.4,111.0 L157.2,111.3 L157.1,111.7 L157.0,111.9 L157.0,111.9 L156.8,112.2 L156.7,112.4 L156.6,112.6 L156.4,112.8 L156.3,112.9 L156.2,113.1 L156.1,113.2 L155.9,113.3 L155.8,113.4 L155.7,113.5 L155.6,113.6 L155.6,113.6 L155.5,113.7 L155.4,113.7 L155.3,113.8 L155.3,113.8 L155.2,113.8 L155.1,113.8 L155.1,113.9 L155.0,113.9 L155.0,113.9 L154.9,113.9 L154.9,113.9 L154.8,113.9 L154.7,113.9 L154.7,113.9 L154.6,113.9 L154.5,113.9 L154.4,113.9 L154.3,113.9 L154.2,113.9 L154.1,113.8 L154.0,113.8 L153.9,113.8 L153.8,113.7 L153.7,113.7 L153.6,113.6 L153.5,113.5 L153.3,113.4 L148.7,120.6 L149.0,120.8 L149.3,121.0 L149.7,121.2 L150.0,121.4 L150.4,121.6 L150.8,121.7 L151.2,121.9 L151.6,122.0 L152.0,122.2 L152.4,122.3 L152.8,122.4 L153.3,122.4 L153.7,122.5 L154.1,122.6 L154.6,122.6 L155.1,122.6 L155.5,122.6 L156.0,122.5 L156.4,122.5 L156.9,122.4 L157.4,122.3 L157.8,122.2 L158.3,122.0 L158.8,121.8 L159.2,121.6 L159.7,121.4 L160.1,121.2 L160.5,120.9 L160.9,120.6 L161.4,120.3 L161.7,120.0 L162.1,119.7 L162.5,119.3 L162.9,118.9 L163.2,118.5 L163.6,118.1 L163.9,117.7 L164.2,117.3 L164.6,116.8 L165.0,116.1 L165.3,115.4 L165.6,114.8 L165.9,114.2 L166.1,113.5 L166.3,112.9 L166.5,112.2 L166.7,111.6 L166.9,110.9 L167.0,110.2 L167.2,109.5 L167.3,108.8 L167.4,108.1 L167.5,107.4 L167.5,106.7 L167.6,106.0 L167.6,105.3 L167.6,104.5 L167.6,103.8 L167.5,103.1 L167.5,102.4 L167.4,101.6 L167.2,100.9 L167.1,100.2 L166.9,99.5 L166.7,98.8 L166.4,98.0 L166.1,97.3 L165.8,96.6 L165.5,95.9 L165.0,95.3 L164.6,94.6 L164.1,94.0 L163.5,93.4 L162.9,92.8 L162.3,92.2 L161.6,91.7 L160.8,91.3 L160.0,90.9 L159.2,90.5 L157.7,90.1 L156.2,90.0 L155.4,90.1 L154.6,90.2 L153.8,90.4 L153.0,90.6 L152.3,90.8 L151.5,91.1 L150.8,91.4 L150.1,91.7 L149.5,92.1 L148.8,92.6 L148.2,93.0 L147.6,93.5 L147.0,94.0 L146.4,94.6 L145.9,95.1 L145.4,95.7 L144.9,96.3 L144.4,97.0 L144.0,97.6 L143.6,98.3 L143.2,99.0 L142.8,99.7 L142.4,100.4 L142.1,101.1 L141.8,101.9 L141.5,102.7 L141.2,103.5 L141.0,104.3 L140.7,105.1 L140.5,105.9 L140.3,106.8 L140.1,107.6 L140.0,108.5 L139.9,109.4 L139.7,110.3 L139.7,111.2 L139.6,112.1 L139.5,113.1 L139.5,114.0 L139.5,115.2 L139.5,116.3 L139.5,117.5 L139.6,118.6 L139.6,119.8 L139.7,121.0 L139.8,122.1 L140.0,123.3 L140.1,124.5 L140.3,125.6 L140.5,126.8 L140.7,127.9 L141.0,129.1 L141.2,130.2 L141.5,131.3 L141.8,132.4 L142.1,133.5 L142.5,134.6 L142.9,135.7 L143.3,136.7 L143.7,137.7 L144.2,138.8 L144.7,139.7 L145.2,140.7 L145.8,141.7 L146.4,142.6 L147.0,143.5 L147.7,144.4 L148.4,145.2 L149.1,146.1 L149.9,146.8 L150.8,147.6 L151.7,148.3 L152.6,148.9 L153.7,149.5 L154.7,150.0 L155.8,150.4 L157.0,150.8 L158.2,151.1 L159.7,151.3 L161.2,151.2 L162.3,151.1 L163.4,150.9 L164.5,150.7 L165.6,150.4 L166.7,150.0 L167.7,149.5 L168.7,149.0 L169.7,148.4 L170.6,147.8 L171.5,147.1 L172.4,146.4 L173.2,145.6 L174.0,144.8 L174.7,143.9 L175.4,143.0 L176.1,142.1 L176.7,141.2 L177.3,140.2 L177.9,139.1 L178.5,138.1 L179.0,137.0 L179.5,135.9 L179.9,134.8 L180.4,133.6 L180.8,132.4 L181.1,131.2 L181.5,129.9 L181.8,128.6 L182.1,127.3 L182.4,126.0 L182.6,124.7 L182.9,123.3 L183.0,121.9 L183.2,120.5 L183.4,119.0 L183.5,117.5 L183.5,116.1 L183.6,114.5 L183.6,113.0 L183.6,111.5 L183.6,110.1 L183.5,108.6 L183.4,107.1 L183.2,105.7 L183.0,104.2 L182.8,102.7 L182.6,101.2 L182.3,99.8 L182.0,98.3 L181.6,96.8 L181.2,95.4 L180.8,94.0 L180.3,92.5 L179.9,91.1 L179.4,89.7 L178.8,88.4 L178.2,87.0 L177.6,85.7 L177.0,84.3 L176.3,83.1 L175.6,81.8 L174.8,80.6 L174.1,79.4 L173.2,78.2 L172.4,77.1 L171.5,76.0 L170.6,74.9 L169.6,73.9 L168.6,72.9 L167.5,72.0 L166.4,71.1 L165.2,70.3 L164.0,69.6 L162.7,68.9 L161.3,68.3 L160.0,67.8 L158.5,67.4 L157.0,67.1 L155.5,66.9 L154.1,67.0 L153.2,67.0 L152.2,67.2 L151.3,67.3 L150.4,67.6 L149.6,67.8 L148.7,68.1 L147.9,68.5 L147.1,68.9 L146.3,69.3 L145.5,69.8 L144.7,70.3 L144.0,70.8 L143.3,71.4 L142.6,72.0 L141.9,72.6 L141.3,73.3 L140.6,73.9 L140.0,74.7 L139.4,75.4 L138.9,76.1 L138.3,76.9 L137.8,77.7 L137.3,78.6 L136.8,79.4 L136.3,80.3 L135.8,81.2 L135.4,82.1 L135.0,83.1 L134.6,84.1 L134.2,85.0 L133.9,86.1 L133.5,87.1 L133.2,88.2 L132.9,89.2 L132.6,90.3 L132.4,91.5 L132.1,92.6 L131.9,93.8 L131.7,95.0 L131.5,96.8 L131.3,98.5 L131.1,100.3 L130.9,102.1 L130.7,104.0 L130.6,105.8 L130.5,107.6 L130.4,109.5 L130.3,111.4 L130.3,113.3 L130.3,115.1 L130.3,117.0 L130.3,118.9 L130.4,120.8 L130.4,122.7 L130.6,124.6 L130.7,126.5 L130.9,128.3 L131.1,130.2 L131.3,132.1 L131.6,133.9 L131.9,135.8 L132.2,137.6 L132.5,139.4 L132.9,141.2 L133.4,143.0 L133.8,144.7 L134.4,146.5 L134.9,148.2 L135.5,149.9 L136.1,151.6 L136.8,153.2 L137.6,154.8 L138.3,156.4 L139.1,157.9 L140.0,159.4 L140.9,160.9 L141.9,162.4 L143.0,163.7 L144.1,165.2 L145.3,166.4 L146.4,167.5 L147.6,168.6 L148.7,169.6 L149.9,170.5 L151.1,171.4 L152.3,172.2 L153.5,173.0 L154.7,173.7 L155.9,174.4 L157.2,175.0 L158.4,175.6 L159.7,176.1 L161.0,176.5 L162.2,177.0 L163.5,177.3 L164.8,177.6 L166.1,177.9 L167.3,178.1 L168.6,178.2 L169.9,178.3 L171.1,178.4 L172.4,178.4 L173.6,178.3 L174.9,178.2 L176.1,178.1 L177.3,177.9 L178.5,177.6 L179.7,177.3 L180.9,176.9 L182.0,176.5 L183.1,176.0 L184.2,175.5 L185.3,174.9 L186.3,174.3 L187.3,173.6 L188.3,172.8 L189.3,172.0 L190.1,171.2 L191.6,169.5 L192.7,167.6 L193.5,166.0 L194.2,164.5 L194.8,162.8 L195.4,161.1 L196.0,159.4 L196.5,157.7 L196.9,155.9 L197.3,154.1 L197.7,152.2 L198.0,150.3 L198.2,148.4 L198.5,146.4 L198.6,144.4 L198.8,142.4 L198.9,140.4 L199.0,138.3 L199.0,136.2 L199.0,134.1 L199.0,131.9 L198.9,129.7 L198.8,127.5 L198.7,125.3 L198.5,123.1 L198.3,120.8 L198.1,118.5 L197.8,116.2 L197.5,113.9 L197.2,111.6 L196.9,109.3 L196.5,107.0 L196.1,104.6 L195.7,102.3 L195.2,100.0 L194.7,97.6 L194.2,95.3 L193.7,92.9 L193.1,90.6 L192.6,88.2 L191.9,85.7 L191.2,83.3 L190.4,81.0 L189.7,78.7 L188.9,76.4 L188.0,74.2 L187.2,72.0 L186.3,69.9 L185.3,67.8 L184.4,65.8 L183.4,63.8 L182.4,61.8 L181.4,59.9 L180.3,58.0 L179.2,56.2 L178.1,54.4 L176.9,52.6 L175.7,50.9 L174.5,49.3 L173.3,47.7 L172.0,46.2 L170.7,44.7 L169.3,43.2 L167.9,41.8 L166.5,40.5 L165.1,39.2 L163.6,38.0 L162.1,36.9 L160.5,35.8 L158.9,34.8 L157.3,33.8 L155.7,32.9 L154.0,32.1 L152.2,31.4 L150.5,30.7 L148.7,30.1 L146.9,29.6 L145.1,29.2 L143.2,28.9 L141.3,28.7 L139.6,28.5 Z" fill="#9ae040" opacity="0.3" filter="url(#sb2)"/>
<path d="M72.0,173.3 L72.2,171.0 L72.4,168.7 L72.6,166.4 L72.8,164.0 L73.0,161.7 L73.3,159.3 L73.6,156.9 L73.9,154.5 L74.2,152.1 L74.6,149.7 L75.0,147.3 L75.4,144.8 L75.8,142.4 L76.2,139.9 L76.7,137.5 L77.2,135.0 L77.7,132.5 L78.3,130.1 L78.8,127.6 L79.4,125.1 L80.0,122.6 L80.7,120.1 L81.3,117.7 L82.0,115.2 L82.8,112.7 L83.5,110.2 L84.3,107.8 L85.1,105.3 L85.9,102.9 L86.8,100.4 L87.7,98.0 L88.6,95.5 L89.5,93.1 L90.5,90.7 L91.5,88.3 L92.6,85.9 L93.6,83.6 L94.7,81.2 L95.9,78.8 L97.0,76.6 L97.8,75.1 L98.7,73.6 L99.6,72.1 L100.5,70.7 L101.4,69.2 L102.4,67.8 L103.3,66.5 L104.3,65.2 L105.3,63.9 L106.2,62.6 L107.2,61.4 L108.2,60.2 L109.2,59.1 L110.3,58.0 L111.3,56.9 L112.3,55.9 L113.4,54.9 L114.4,53.9 L115.5,53.0 L116.5,52.2 L117.6,51.3 L118.7,50.5 L119.8,49.8 L120.9,49.0 L122.0,48.4 L123.1,47.7 L124.2,47.1 L125.3,46.6 L126.4,46.1 L127.6,45.6 L128.7,45.1 L129.9,44.7 L131.0,44.4 L132.2,44.1 L133.3,43.8 L134.5,43.5 L135.7,43.3 L136.9,43.2 L138.1,43.1 L139.4,43.0 L138.6,31.0 L137.1,31.1 L135.4,31.3 L133.8,31.5 L132.3,31.8 L130.7,32.2 L129.1,32.6 L127.6,33.0 L126.1,33.5 L124.6,34.0 L123.1,34.6 L121.6,35.3 L120.2,36.0 L118.7,36.7 L117.3,37.5 L115.9,38.3 L114.5,39.2 L113.2,40.1 L111.8,41.1 L110.5,42.1 L109.2,43.1 L107.9,44.2 L106.7,45.3 L105.4,46.4 L104.2,47.6 L103.0,48.9 L101.8,50.1 L100.6,51.4 L99.5,52.8 L98.3,54.1 L97.2,55.5 L96.1,57.0 L95.1,58.4 L94.0,59.9 L93.0,61.5 L91.9,63.0 L90.9,64.6 L89.9,66.3 L89.0,67.9 L88.0,69.6 L87.0,71.4 L85.8,74.0 L84.6,76.5 L83.5,79.0 L82.4,81.5 L81.3,84.0 L80.3,86.6 L79.3,89.1 L78.3,91.7 L77.4,94.2 L76.5,96.8 L75.6,99.4 L74.8,102.0 L74.0,104.5 L73.2,107.1 L72.4,109.7 L71.7,112.3 L71.0,114.9 L70.3,117.5 L69.7,120.1 L69.1,122.7 L68.5,125.2 L68.0,127.8 L67.4,130.4 L66.9,133.0 L66.4,135.5 L66.0,138.1 L65.6,140.6 L65.1,143.2 L64.8,145.7 L64.4,148.2 L64.1,150.7 L63.8,153.2 L63.5,155.7 L63.2,158.2 L62.9,160.6 L62.7,163.1 L62.5,165.5 L62.3,167.9 L62.2,170.3 L62.0,172.7 Z" fill="url(#stg)" filter="url(#sb1)"/>
<path d="M68.0,173.1 L68.2,170.7 L68.4,168.4 L68.6,166.0 L68.8,163.7 L69.0,161.3 L69.3,158.9 L69.6,156.4 L69.9,154.0 L70.2,151.6 L70.6,149.1 L71.0,146.6 L71.4,144.2 L71.8,141.7 L72.2,139.2 L72.7,136.7 L73.2,134.2 L73.7,131.7 L74.3,129.2 L74.8,126.7 L75.4,124.2 L76.1,121.6 L76.7,119.1 L77.4,116.6 L78.1,114.1 L78.8,111.6 L79.6,109.1 L80.4,106.6 L81.2,104.0 L82.0,101.5 L82.9,99.1 L83.8,96.6 L84.7,94.1 L85.7,91.6 L86.7,89.2 L87.7,86.7 L88.8,84.3 L89.9,81.9 L91.0,79.4 L92.1,77.0 L93.3,74.7 L94.2,73.1 L95.1,71.5 L96.0,70.0 L97.0,68.4 L97.9,67.0 L98.9,65.5 L99.9,64.1 L100.9,62.7 L101.9,61.4 L102.9,60.0 L104.0,58.8 L105.0,57.5 L106.1,56.3 L107.2,55.1 L108.3,54.0 L109.4,52.9 L110.5,51.8 L111.6,50.8 L112.7,49.8 L113.9,48.9 L115.1,48.0 L116.2,47.1 L117.4,46.3 L118.6,45.5 L119.8,44.8 L121.0,44.1 L122.2,43.4 L123.5,42.8 L124.7,42.2 L126.0,41.7 L127.2,41.2 L128.5,40.7 L129.8,40.3 L131.1,40.0 L132.4,39.6 L133.7,39.4 L135.0,39.2 L136.4,39.0 L137.7,38.8 L139.1,38.7 L138.9,35.3 L137.4,35.4 L136.0,35.5 L134.5,35.7 L133.1,36.0 L131.6,36.3 L130.2,36.7 L128.8,37.1 L127.4,37.5 L126.0,38.0 L124.7,38.6 L123.3,39.1 L122.0,39.8 L120.7,40.4 L119.4,41.2 L118.1,41.9 L116.8,42.7 L115.6,43.6 L114.3,44.5 L113.1,45.4 L111.9,46.4 L110.7,47.4 L109.5,48.4 L108.3,49.5 L107.1,50.6 L106.0,51.8 L104.9,53.0 L103.8,54.2 L102.7,55.5 L101.6,56.8 L100.5,58.1 L99.5,59.5 L98.4,60.9 L97.4,62.3 L96.4,63.8 L95.4,65.3 L94.4,66.8 L93.5,68.4 L92.5,70.0 L91.6,71.6 L90.7,73.3 L89.5,75.8 L88.4,78.2 L87.2,80.7 L86.2,83.1 L85.1,85.6 L84.1,88.1 L83.1,90.6 L82.2,93.1 L81.2,95.6 L80.4,98.2 L79.5,100.7 L78.7,103.2 L77.9,105.8 L77.1,108.3 L76.4,110.9 L75.6,113.4 L75.0,115.9 L74.3,118.5 L73.7,121.0 L73.1,123.6 L72.5,126.1 L71.9,128.7 L71.4,131.2 L70.9,133.7 L70.4,136.3 L70.0,138.8 L69.5,141.3 L69.1,143.8 L68.8,146.3 L68.4,148.8 L68.1,151.3 L67.8,153.7 L67.5,156.2 L67.2,158.6 L66.9,161.1 L66.7,163.5 L66.5,165.9 L66.3,168.2 L66.2,170.6 L66.0,172.9 Z" fill="#c4ec90" opacity="0.6" filter="url(#sb1)"/>
<path d="M138.6,43.0 L139.9,43.1 L141.1,43.2 L142.3,43.4 L143.5,43.7 L144.6,44.0 L145.8,44.3 L146.9,44.8 L148.0,45.2 L149.2,45.8 L150.3,46.4 L151.4,47.0 L152.5,47.7 L153.6,48.5 L154.7,49.3 L155.8,50.2 L156.9,51.1 L158.0,52.1 L159.1,53.2 L160.1,54.3 L161.2,55.5 L162.2,56.7 L163.2,58.0 L164.2,59.3 L165.2,60.7 L166.2,62.1 L167.1,63.6 L168.1,65.2 L169.0,66.8 L169.9,68.4 L170.8,70.1 L171.7,71.9 L172.5,73.7 L173.3,75.5 L174.1,77.4 L174.9,79.3 L175.7,81.3 L176.4,83.3 L177.1,85.4 L177.8,87.5 L178.5,89.6 L179.0,91.7 L179.6,93.9 L180.1,96.1 L180.6,98.3 L181.1,100.5 L181.6,102.7 L182.0,104.9 L182.5,107.1 L182.8,109.3 L183.2,111.5 L183.5,113.6 L183.8,115.8 L184.1,117.9 L184.4,120.0 L184.6,122.1 L184.8,124.2 L185.0,126.3 L185.1,128.3 L185.2,130.3 L185.3,132.3 L185.3,134.2 L185.4,136.1 L185.3,138.0 L185.3,139.8 L185.2,141.6 L185.1,143.4 L185.0,145.1 L184.8,146.8 L184.6,148.4 L184.3,149.9 L184.1,151.4 L183.8,152.9 L183.4,154.3 L183.1,155.6 L182.7,156.9 L182.2,158.1 L181.8,159.2 L181.3,160.3 L180.8,161.3 L180.5,161.9 L180.6,161.8 L180.2,162.1 L179.8,162.4 L179.4,162.8 L179.0,163.1 L178.5,163.3 L178.1,163.6 L177.6,163.8 L177.0,164.1 L176.5,164.3 L175.9,164.5 L175.3,164.6 L174.7,164.8 L174.1,164.9 L173.4,165.0 L172.8,165.0 L172.1,165.1 L171.4,165.1 L170.6,165.1 L169.9,165.0 L169.2,164.9 L168.4,164.8 L167.6,164.6 L166.8,164.5 L166.1,164.2 L165.3,164.0 L164.4,163.7 L163.6,163.4 L162.8,163.0 L162.0,162.6 L161.2,162.2 L160.4,161.7 L159.6,161.2 L158.7,160.6 L157.9,160.0 L157.1,159.4 L156.3,158.7 L155.5,158.0 L154.7,157.2 L154.0,156.5 L153.3,155.6 L152.6,154.7 L151.9,153.7 L151.2,152.7 L150.6,151.6 L150.0,150.4 L149.4,149.2 L148.8,148.0 L148.3,146.7 L147.7,145.4 L147.2,144.0 L146.8,142.6 L146.3,141.1 L145.9,139.7 L145.5,138.2 L145.2,136.6 L144.8,135.1 L144.5,133.5 L144.2,131.9 L144.0,130.3 L143.7,128.6 L143.5,127.0 L143.4,125.3 L143.2,123.6 L143.1,121.9 L143.0,120.2 L142.9,118.5 L142.8,116.8 L142.8,115.1 L142.8,113.4 L142.8,111.6 L142.8,109.9 L142.9,108.2 L142.9,106.5 L143.0,104.8 L143.1,103.2 L143.3,101.5 L143.4,99.9 L143.6,98.3 L143.8,96.7 L143.9,95.7 L144.1,94.8 L144.2,93.9 L144.4,93.1 L144.6,92.2 L144.8,91.4 L145.0,90.6 L145.3,89.8 L145.5,89.1 L145.8,88.4 L146.1,87.7 L146.3,87.0 L146.6,86.4 L146.9,85.7 L147.2,85.1 L147.5,84.6 L147.9,84.0 L148.2,83.5 L148.5,83.1 L148.8,82.6 L149.2,82.2 L149.5,81.8 L149.8,81.4 L150.2,81.0 L150.5,80.7 L150.8,80.4 L151.2,80.1 L151.5,79.9 L151.8,79.7 L152.1,79.5 L152.5,79.3 L152.8,79.1 L153.1,79.0 L153.4,78.9 L153.6,78.8 L153.9,78.7 L154.2,78.7 L154.5,78.6 L154.7,78.6 L154.7,78.6 L155.3,78.6 L155.9,78.7 L156.5,78.9 L157.1,79.1 L157.7,79.4 L158.4,79.7 L159.0,80.0 L159.7,80.5 L160.3,80.9 L160.9,81.5 L161.6,82.1 L162.2,82.7 L162.9,83.4 L163.5,84.1 L164.1,84.9 L164.7,85.8 L165.3,86.6 L165.9,87.6 L166.4,88.5 L167.0,89.5 L167.5,90.5 L168.0,91.6 L168.5,92.7 L169.0,93.8 L169.4,94.9 L169.8,96.1 L170.2,97.3 L170.6,98.4 L170.9,99.7 L171.3,100.9 L171.5,102.1 L171.8,103.3 L172.0,104.5 L172.3,105.8 L172.4,107.0 L172.6,108.2 L172.7,109.4 L172.8,110.6 L172.8,111.8 L172.9,113.0 L172.9,114.3 L172.8,115.7 L172.8,116.9 L172.7,118.2 L172.6,119.4 L172.5,120.6 L172.4,121.8 L172.2,123.0 L172.0,124.1 L171.8,125.2 L171.6,126.3 L171.4,127.3 L171.1,128.3 L170.8,129.2 L170.5,130.2 L170.2,131.1 L169.9,131.9 L169.5,132.8 L169.2,133.5 L168.8,134.3 L168.4,135.0 L168.0,135.7 L167.6,136.3 L167.2,136.9 L166.8,137.4 L166.4,137.9 L165.9,138.4 L165.5,138.8 L165.0,139.2 L164.6,139.6 L164.2,139.9 L163.7,140.2 L163.3,140.4 L162.8,140.6 L162.4,140.8 L161.9,141.0 L161.5,141.1 L161.0,141.2 L160.5,141.2 L160.2,141.2 L159.9,141.2 L159.5,141.1 L159.0,141.0 L158.6,140.8 L158.2,140.7 L157.7,140.4 L157.3,140.2 L156.9,139.9 L156.4,139.5 L156.0,139.1 L155.6,138.7 L155.1,138.2 L154.7,137.7 L154.3,137.1 L153.8,136.5 L153.4,135.9 L153.0,135.2 L152.7,134.5 L152.3,133.8 L151.9,133.0 L151.6,132.2 L151.2,131.4 L150.9,130.6 L150.6,129.7 L150.3,128.8 L150.0,127.9 L149.8,126.9 L149.5,126.0 L149.3,125.0 L149.1,124.0 L148.9,123.1 L148.7,122.1 L148.6,121.1 L148.5,120.0 L148.3,119.0 L148.2,118.0 L148.1,117.0 L148.1,116.0 L148.0,115.0 L148.0,114.0 L148.0,113.2 L148.0,112.5 L148.0,111.8 L148.1,111.1 L148.1,110.4 L148.2,109.7 L148.3,109.0 L148.4,108.4 L148.5,107.7 L148.6,107.1 L148.8,106.5 L148.9,105.9 L149.1,105.3 L149.3,104.7 L149.5,104.2 L149.7,103.7 L149.9,103.2 L150.2,102.7 L150.4,102.2 L150.7,101.8 L150.9,101.4 L151.2,101.0 L151.5,100.6 L151.7,100.3 L152.0,99.9 L152.3,99.6 L152.6,99.3 L152.9,99.1 L153.2,98.8 L153.6,98.6 L153.9,98.4 L154.2,98.2 L154.5,98.0 L154.9,97.9 L155.2,97.8 L155.5,97.7 L155.9,97.6 L156.3,97.5 L156.6,97.5 L156.6,97.4 L156.7,97.5 L157.0,97.6 L157.3,97.7 L157.6,97.9 L157.8,98.1 L158.1,98.3 L158.4,98.5 L158.6,98.7 L158.8,99.0 L159.0,99.3 L159.2,99.6 L159.4,99.9 L159.6,100.3 L159.8,100.7 L160.0,101.1 L160.1,101.5 L160.2,101.9 L160.3,102.4 L160.4,102.8 L160.5,103.3 L160.6,103.8 L160.6,104.3 L160.7,104.8 L160.7,105.3 L160.7,105.8 L160.7,106.3 L160.7,106.9 L160.6,107.4 L160.6,107.9 L160.5,108.4 L160.5,109.0 L160.4,109.5 L160.3,110.0 L160.1,110.5 L160.0,110.9 L159.9,111.4 L159.7,111.8 L159.6,112.3 L159.4,112.7 L159.2,113.0 L159.1,113.3 L158.9,113.6 L158.7,113.9 L158.5,114.1 L158.3,114.4 L158.1,114.6 L158.0,114.8 L157.8,115.0 L157.6,115.2 L157.4,115.4 L157.2,115.5 L157.0,115.6 L156.8,115.8 L156.7,115.9 L156.5,116.0 L156.3,116.1 L156.1,116.1 L156.0,116.2 L155.8,116.3 L155.6,116.3 L155.4,116.3 L155.3,116.4 L155.1,116.4 L154.9,116.4 L154.7,116.4 L154.6,116.4 L154.4,116.4 L154.2,116.4 L154.0,116.4 L153.8,116.3 L153.6,116.3 L153.5,116.2 L153.3,116.2 L153.1,116.1 L152.9,116.0 L152.7,115.9 L152.5,115.9 L152.3,115.8 L152.2,115.7 L151.9,115.5 L150.1,118.5 L150.3,118.6 L150.6,118.8 L150.9,119.0 L151.1,119.1 L151.4,119.3 L151.7,119.4 L152.0,119.5 L152.3,119.6 L152.7,119.7 L153.0,119.8 L153.3,119.9 L153.6,120.0 L154.0,120.0 L154.3,120.1 L154.7,120.1 L155.0,120.1 L155.3,120.1 L155.7,120.0 L156.0,120.0 L156.4,119.9 L156.7,119.9 L157.1,119.8 L157.4,119.7 L157.8,119.5 L158.1,119.4 L158.5,119.2 L158.8,119.0 L159.1,118.8 L159.5,118.6 L159.8,118.4 L160.1,118.1 L160.4,117.8 L160.7,117.5 L161.0,117.2 L161.3,116.9 L161.6,116.6 L161.9,116.2 L162.2,115.8 L162.5,115.4 L162.8,115.0 L163.1,114.4 L163.3,113.8 L163.5,113.3 L163.7,112.7 L163.9,112.2 L164.1,111.6 L164.3,111.0 L164.5,110.4 L164.6,109.7 L164.7,109.1 L164.8,108.5 L164.9,107.9 L165.0,107.2 L165.0,106.6 L165.1,105.9 L165.1,105.3 L165.1,104.6 L165.1,104.0 L165.0,103.3 L165.0,102.7 L164.9,102.1 L164.8,101.4 L164.7,100.8 L164.5,100.2 L164.3,99.6 L164.1,99.0 L163.9,98.4 L163.6,97.8 L163.3,97.2 L163.0,96.7 L162.6,96.1 L162.2,95.6 L161.8,95.1 L161.3,94.7 L160.8,94.2 L160.2,93.8 L159.6,93.5 L159.0,93.1 L158.4,92.9 L157.4,92.6 L156.3,92.5 L155.7,92.6 L155.0,92.7 L154.4,92.8 L153.8,92.9 L153.1,93.1 L152.5,93.4 L151.9,93.6 L151.4,93.9 L150.8,94.2 L150.2,94.6 L149.7,95.0 L149.2,95.4 L148.7,95.8 L148.2,96.3 L147.8,96.8 L147.3,97.3 L146.9,97.8 L146.5,98.4 L146.1,98.9 L145.7,99.5 L145.4,100.1 L145.0,100.8 L144.7,101.4 L144.4,102.1 L144.1,102.8 L143.8,103.5 L143.6,104.2 L143.4,104.9 L143.1,105.7 L142.9,106.5 L142.8,107.2 L142.6,108.0 L142.5,108.9 L142.3,109.7 L142.2,110.5 L142.1,111.4 L142.1,112.2 L142.0,113.1 L142.0,114.0 L142.0,115.1 L142.0,116.2 L142.0,117.3 L142.1,118.5 L142.1,119.6 L142.2,120.7 L142.3,121.8 L142.5,122.9 L142.6,124.1 L142.8,125.2 L143.0,126.3 L143.2,127.4 L143.4,128.5 L143.6,129.5 L143.9,130.6 L144.2,131.7 L144.5,132.7 L144.8,133.7 L145.2,134.7 L145.6,135.7 L146.0,136.7 L146.4,137.6 L146.9,138.6 L147.4,139.5 L147.9,140.3 L148.4,141.2 L149.0,142.0 L149.6,142.8 L150.2,143.6 L150.9,144.3 L151.6,145.0 L152.3,145.6 L153.1,146.2 L153.9,146.8 L154.8,147.3 L155.7,147.7 L156.6,148.1 L157.6,148.4 L158.6,148.6 L159.8,148.8 L161.0,148.7 L162.0,148.6 L162.9,148.5 L163.9,148.3 L164.8,148.0 L165.7,147.7 L166.6,147.3 L167.5,146.8 L168.3,146.3 L169.1,145.8 L169.9,145.2 L170.7,144.5 L171.4,143.8 L172.1,143.1 L172.8,142.3 L173.4,141.5 L174.0,140.7 L174.6,139.8 L175.2,138.9 L175.7,138.0 L176.2,137.0 L176.7,136.0 L177.2,134.9 L177.6,133.9 L178.0,132.8 L178.4,131.6 L178.7,130.5 L179.1,129.3 L179.4,128.1 L179.7,126.8 L179.9,125.6 L180.2,124.3 L180.4,122.9 L180.6,121.6 L180.7,120.2 L180.9,118.8 L181.0,117.4 L181.0,116.0 L181.1,114.5 L181.1,113.0 L181.1,111.6 L181.1,110.2 L181.0,108.8 L180.9,107.4 L180.7,106.0 L180.6,104.6 L180.4,103.1 L180.1,101.7 L179.8,100.3 L179.5,98.9 L179.2,97.5 L178.8,96.1 L178.4,94.7 L178.0,93.3 L177.5,92.0 L177.0,90.6 L176.5,89.3 L176.0,88.0 L175.4,86.7 L174.8,85.5 L174.1,84.3 L173.4,83.1 L172.7,81.9 L172.0,80.8 L171.2,79.7 L170.4,78.6 L169.6,77.6 L168.7,76.6 L167.8,75.7 L166.9,74.8 L165.9,73.9 L164.9,73.2 L163.8,72.4 L162.7,71.8 L161.6,71.2 L160.4,70.7 L159.2,70.2 L158.0,69.9 L156.7,69.6 L155.3,69.4 L154.2,69.5 L153.4,69.5 L152.7,69.6 L151.9,69.8 L151.1,70.0 L150.4,70.2 L149.6,70.5 L148.9,70.8 L148.2,71.1 L147.5,71.5 L146.8,71.9 L146.2,72.3 L145.5,72.8 L144.9,73.3 L144.3,73.8 L143.7,74.4 L143.1,75.0 L142.5,75.6 L142.0,76.2 L141.4,76.9 L140.9,77.6 L140.4,78.3 L139.9,79.1 L139.4,79.8 L139.0,80.6 L138.5,81.4 L138.1,82.3 L137.7,83.2 L137.3,84.0 L136.9,85.0 L136.6,85.9 L136.2,86.8 L135.9,87.8 L135.6,88.8 L135.3,89.9 L135.1,90.9 L134.8,92.0 L134.6,93.1 L134.4,94.2 L134.2,95.3 L134.0,97.1 L133.8,98.8 L133.6,100.6 L133.4,102.3 L133.2,104.1 L133.1,105.9 L133.0,107.8 L132.9,109.6 L132.8,111.4 L132.8,113.3 L132.8,115.1 L132.8,117.0 L132.8,118.8 L132.8,120.7 L132.9,122.5 L133.0,124.4 L133.2,126.2 L133.3,128.1 L133.5,129.9 L133.8,131.7 L134.0,133.5 L134.3,135.3 L134.6,137.1 L135.0,138.9 L135.4,140.6 L135.8,142.3 L136.2,144.1 L136.7,145.7 L137.3,147.4 L137.9,149.0 L138.5,150.6 L139.1,152.2 L139.8,153.7 L140.5,155.2 L141.3,156.7 L142.2,158.1 L143.0,159.5 L144.0,160.9 L144.9,162.2 L146.0,163.5 L147.1,164.7 L148.2,165.7 L149.2,166.7 L150.3,167.6 L151.4,168.5 L152.5,169.3 L153.6,170.1 L154.8,170.9 L155.9,171.5 L157.1,172.2 L158.2,172.7 L159.4,173.3 L160.6,173.7 L161.8,174.2 L163.0,174.6 L164.1,174.9 L165.3,175.2 L166.5,175.4 L167.7,175.6 L168.8,175.8 L170.0,175.8 L171.2,175.9 L172.3,175.9 L173.5,175.8 L174.6,175.8 L175.7,175.6 L176.8,175.4 L177.9,175.2 L179.0,174.9 L180.0,174.6 L181.1,174.2 L182.1,173.8 L183.1,173.3 L184.0,172.7 L185.0,172.2 L185.9,171.6 L186.7,170.9 L187.6,170.2 L188.4,169.4 L189.5,168.1 L190.5,166.4 L191.2,165.0 L191.9,163.5 L192.5,161.9 L193.1,160.4 L193.6,158.7 L194.1,157.1 L194.5,155.3 L194.9,153.6 L195.2,151.8 L195.5,150.0 L195.8,148.1 L196.0,146.2 L196.1,144.2 L196.3,142.3 L196.4,140.3 L196.5,138.2 L196.5,136.2 L196.5,134.1 L196.5,132.0 L196.4,129.8 L196.3,127.7 L196.2,125.5 L196.0,123.3 L195.8,121.0 L195.6,118.8 L195.3,116.5 L195.0,114.3 L194.7,112.0 L194.4,109.7 L194.0,107.4 L193.6,105.1 L193.2,102.8 L192.8,100.4 L192.3,98.1 L191.8,95.8 L191.3,93.5 L190.7,91.1 L190.1,88.8 L189.5,86.4 L188.8,84.0 L188.1,81.7 L187.3,79.5 L186.5,77.3 L185.7,75.1 L184.8,73.0 L184.0,70.9 L183.1,68.9 L182.1,66.9 L181.2,64.9 L180.2,63.0 L179.2,61.1 L178.1,59.3 L177.1,57.5 L176.0,55.7 L174.9,54.1 L173.7,52.4 L172.5,50.8 L171.3,49.3 L170.1,47.8 L168.8,46.3 L167.5,45.0 L166.2,43.6 L164.9,42.4 L163.5,41.1 L162.1,40.0 L160.6,38.9 L159.1,37.9 L157.6,36.9 L156.1,36.0 L154.5,35.1 L152.9,34.4 L151.3,33.7 L149.7,33.1 L148.0,32.5 L146.3,32.1 L144.6,31.7 L142.8,31.4 L141.1,31.1 L139.4,31.0 Z" fill="#ade83a" filter="url(#sb1)"/>
<path d="M138.9,39.0 L140.3,39.1 L141.7,39.3 L143.1,39.5 L144.4,39.8 L145.7,40.1 L147.1,40.6 L148.4,41.0 L149.7,41.6 L151.0,42.2 L152.3,42.9 L153.5,43.6 L154.8,44.4 L156.0,45.2 L157.2,46.1 L158.4,47.1 L159.6,48.1 L160.8,49.2 L162.0,50.4 L163.1,51.6 L164.2,52.8 L165.3,54.1 L166.4,55.5 L167.5,56.9 L168.5,58.4 L169.6,59.9 L170.6,61.5 L171.6,63.1 L172.5,64.8 L173.5,66.5 L174.4,68.3 L175.3,70.1 L176.2,72.0 L177.1,73.9 L177.9,75.9 L178.7,77.9 L179.5,79.9 L180.3,82.0 L181.0,84.1 L181.7,86.3 L182.4,88.5 L183.0,90.7 L183.6,92.9 L184.1,95.1 L184.7,97.4 L185.2,99.6 L185.6,101.9 L186.1,104.1 L186.5,106.4 L186.9,108.6 L187.3,110.8 L187.6,113.0 L187.9,115.2 L188.2,117.4 L188.5,119.6 L188.7,121.7 L188.9,123.9 L189.1,126.0 L189.3,128.1 L189.4,130.1 L189.4,132.2 L189.5,134.2 L189.5,136.1 L189.5,138.1 L189.5,140.0 L189.4,141.9 L189.3,143.7 L189.1,145.5 L188.9,147.3 L188.7,149.0 L188.4,150.6 L188.2,152.3 L187.8,153.8 L187.5,155.3 L187.1,156.8 L186.6,158.2 L186.2,159.6 L185.7,160.8 L185.1,162.1 L184.5,163.2 L184.0,164.3 L183.6,164.7 L183.0,165.2 L182.5,165.7 L181.9,166.1 L181.3,166.6 L180.7,167.0 L180.0,167.3 L179.3,167.7 L178.6,168.0 L177.9,168.3 L177.1,168.5 L176.3,168.7 L175.5,168.9 L174.7,169.1 L173.9,169.2 L173.0,169.2 L172.2,169.3 L171.3,169.3 L170.4,169.3 L169.5,169.2 L168.6,169.1 L167.7,169.0 L166.7,168.8 L165.8,168.6 L164.8,168.3 L163.9,168.0 L162.9,167.7 L162.0,167.3 L161.0,166.9 L160.1,166.4 L159.1,165.9 L158.2,165.3 L157.2,164.7 L156.3,164.1 L155.3,163.4 L154.4,162.7 L153.5,161.9 L152.6,161.1 L151.7,160.2 L150.8,159.3 L150.0,158.3 L149.1,157.2 L148.3,156.0 L147.6,154.9 L146.9,153.6 L146.2,152.4 L145.5,151.0 L144.9,149.7 L144.3,148.3 L143.7,146.8 L143.2,145.4 L142.7,143.9 L142.2,142.3 L141.8,140.8 L141.4,139.2 L141.0,137.6 L140.7,135.9 L140.3,134.3 L140.0,132.6 L139.8,130.9 L139.5,129.2 L139.3,127.4 L139.2,125.7 L139.0,123.9 L138.9,122.2 L138.8,120.4 L138.7,118.6 L138.6,116.9 L138.6,115.1 L138.6,113.3 L138.6,111.6 L138.7,109.8 L138.7,108.0 L138.8,106.3 L138.9,104.5 L139.0,102.8 L139.2,101.1 L139.3,99.4 L139.5,97.8 L139.7,96.1 L139.9,95.1 L140.1,94.1 L140.2,93.1 L140.5,92.1 L140.7,91.2 L140.9,90.3 L141.2,89.4 L141.4,88.6 L141.7,87.7 L142.0,86.9 L142.3,86.1 L142.6,85.4 L143.0,84.6 L143.3,83.9 L143.7,83.2 L144.1,82.5 L144.4,81.9 L144.8,81.3 L145.2,80.7 L145.6,80.2 L146.1,79.6 L146.5,79.1 L146.9,78.6 L147.4,78.2 L147.8,77.7 L148.3,77.3 L148.7,77.0 L149.2,76.6 L149.7,76.3 L150.1,76.0 L150.6,75.7 L151.1,75.5 L151.6,75.3 L152.1,75.1 L152.6,75.0 L153.0,74.8 L153.5,74.7 L154.0,74.7 L154.5,74.6 L155.0,74.6 L155.9,74.7 L156.8,74.9 L157.7,75.1 L158.6,75.4 L159.4,75.8 L160.3,76.2 L161.1,76.7 L162.0,77.3 L162.8,77.9 L163.6,78.5 L164.3,79.3 L165.1,80.0 L165.8,80.8 L166.6,81.7 L167.3,82.6 L167.9,83.6 L168.6,84.5 L169.2,85.6 L169.8,86.6 L170.7,86.1 L170.1,85.1 L169.5,84.0 L168.8,83.0 L168.1,82.0 L167.4,81.0 L166.6,80.1 L165.9,79.3 L165.1,78.5 L164.3,77.7 L163.5,77.0 L162.6,76.4 L161.7,75.8 L160.8,75.2 L159.9,74.7 L159.0,74.3 L158.0,74.0 L157.1,73.7 L156.1,73.5 L155.0,73.4 L154.4,73.4 L153.9,73.5 L153.3,73.5 L152.8,73.6 L152.2,73.8 L151.7,74.0 L151.1,74.2 L150.6,74.4 L150.0,74.6 L149.5,74.9 L149.0,75.2 L148.5,75.6 L148.0,76.0 L147.5,76.4 L147.0,76.8 L146.5,77.3 L146.0,77.7 L145.5,78.2 L145.1,78.8 L144.6,79.3 L144.2,79.9 L143.7,80.6 L143.3,81.2 L142.9,81.9 L142.5,82.6 L142.1,83.3 L141.7,84.0 L141.4,84.8 L141.0,85.6 L140.7,86.4 L140.4,87.2 L140.1,88.1 L139.8,89.0 L139.5,89.9 L139.3,90.9 L139.0,91.8 L138.8,92.8 L138.6,93.8 L138.4,94.8 L138.3,95.9 L138.0,97.6 L137.8,99.3 L137.6,101.0 L137.5,102.7 L137.3,104.4 L137.2,106.2 L137.1,108.0 L137.0,109.7 L137.0,111.5 L136.9,113.3 L136.9,115.1 L136.9,116.9 L137.0,118.7 L137.0,120.5 L137.1,122.3 L137.2,124.1 L137.4,125.8 L137.6,127.6 L137.7,129.4 L138.0,131.1 L138.2,132.9 L138.5,134.6 L138.8,136.3 L139.2,138.0 L139.5,139.6 L139.9,141.3 L140.4,142.9 L140.8,144.5 L141.3,146.0 L141.9,147.5 L142.4,149.0 L143.0,150.5 L143.7,151.9 L144.3,153.3 L145.1,154.6 L145.8,155.9 L146.6,157.2 L147.4,158.4 L148.3,159.6 L149.2,160.7 L150.1,161.7 L151.1,162.6 L152.0,163.5 L153.0,164.4 L154.0,165.1 L155.0,165.9 L156.0,166.6 L157.0,167.2 L158.0,167.8 L159.0,168.4 L160.1,168.9 L161.1,169.4 L162.1,169.8 L163.1,170.2 L164.2,170.5 L165.2,170.8 L166.2,171.1 L167.2,171.3 L168.3,171.4 L169.3,171.5 L170.3,171.6 L171.2,171.7 L172.2,171.7 L173.2,171.6 L174.1,171.6 L175.1,171.4 L176.0,171.3 L176.9,171.1 L177.8,170.9 L178.7,170.6 L179.5,170.3 L180.3,169.9 L181.1,169.5 L181.9,169.1 L182.7,168.7 L183.4,168.2 L184.1,167.6 L184.7,167.1 L185.4,166.5 L186.0,165.7 L186.8,164.4 L187.4,163.2 L188.0,161.8 L188.6,160.5 L189.1,159.0 L189.6,157.5 L190.0,156.0 L190.4,154.4 L190.8,152.8 L191.1,151.1 L191.4,149.4 L191.6,147.6 L191.8,145.8 L192.0,143.9 L192.1,142.0 L192.2,140.1 L192.3,138.2 L192.3,136.2 L192.3,134.1 L192.3,132.1 L192.2,130.0 L192.1,127.9 L192.0,125.8 L191.9,123.6 L191.7,121.4 L191.5,119.3 L191.2,117.0 L190.9,114.8 L190.6,112.6 L190.3,110.3 L190.0,108.1 L189.6,105.8 L189.2,103.5 L188.7,101.3 L188.3,99.0 L187.8,96.7 L187.3,94.4 L186.7,92.1 L186.2,89.8 L185.6,87.5 L184.9,85.3 L184.2,83.0 L183.4,80.9 L182.7,78.7 L181.9,76.6 L181.1,74.6 L180.2,72.5 L179.4,70.6 L178.5,68.6 L177.6,66.7 L176.6,64.9 L175.6,63.1 L174.6,61.3 L173.6,59.6 L172.6,58.0 L171.5,56.4 L170.4,54.8 L169.3,53.3 L168.2,51.8 L167.0,50.4 L165.8,49.1 L164.6,47.8 L163.4,46.5 L162.1,45.3 L160.9,44.2 L159.6,43.2 L158.2,42.1 L156.9,41.2 L155.5,40.3 L154.1,39.5 L152.7,38.7 L151.3,38.0 L149.8,37.4 L148.4,36.9 L146.9,36.4 L145.3,35.9 L143.8,35.6 L142.3,35.3 L140.7,35.1 L139.1,35.0 Z" fill="#d4f47c" opacity="0.55" filter="url(#sb1)"/>
</g>
</svg>
<svg class="a" style="left:877px;top:287px" width="188" height="79" viewBox="0 0 188 79">
<defs>
<filter id="vb4" x="-30%" y="-30%" width="160%" height="160%"><feGaussianBlur stdDeviation="4"/></filter>
<filter id="vb2" x="-30%" y="-30%" width="160%" height="160%"><feGaussianBlur stdDeviation="2.5"/></filter>
<clipPath id="vc"><rect width="188" height="79"/></clipPath>
</defs>
<g clip-path="url(#vc)">
<rect width="188" height="79" fill="#393c40"/>
<path d="M-5,16 C20,12 40,20 60,22 C80,25 100,24 118,32 C138,42 160,56 195,64 L195,85 L-5,85 Z" fill="#494d52" filter="url(#vb4)"/>
<path d="M-10,-10 L130,-10 L128,10 C112,22 95,28 75,25 C55,21 35,15 15,17 C5,18 -10,16 -10,16 Z" fill="#222427" filter="url(#vb2)"/>
<path d="M92,10 C112,24 128,34 143,47 C156,58 166,66 178,72" stroke="#1c1e20" stroke-width="13" fill="none" filter="url(#vb2)"/>
<path d="M21,50 C25,60 30,70 36,82" stroke="#222427" stroke-width="4" fill="none" filter="url(#vb2)"/>
<text x="40" y="45" font-family="Liberation Serif" font-size="6.6" fill="#1c1c1c" letter-spacing="0.3"><tspan font-size="5">THE</tspan> <tspan font-size="9">B</tspan>LENDER <tspan font-size="9">F</tspan>OUNDATION</text>
</g>
</svg>
<div class="a" style="left:877px;top:395px;width:187px;height:26px;background:#5f5f5f"></div>
<div class="a" style="left:885px;top:402px;width:4px;height:11px;background:#f2f2f2"></div>
<div class="a" style="left:892px;top:402px;width:4px;height:11px;background:#f2f2f2"></div>
<div class="a" style="left:904px;top:404px;width:97px;height:8px;background:#d6d6d6;border-radius:4px"></div>
<div class="a" style="left:889px;top:386px;width:30px;height:14px;background:#7b7b7b;border-radius:7px"></div>
<svg class="a" style="left:895px;top:397px" width="14" height="12"><path d="M2,0 L12,0 L8,11 Z" fill="#7b7b7b"/></svg>
<div class="a" style="left:889px;top:388px;width:30px;font-size:10px;line-height:10px;color:#d4d4d4;text-align:center;font-family:'Liberation Sans'">0:03</div>
<div class="a" style="left:1008px;top:403px;font-size:10.5px;line-height:10px;color:#dadada;font-family:'Liberation Sans'">14:48</div>
<svg class="a" style="left:1041px;top:399px" width="17" height="16" viewBox="0 0 17 16"><path d="M1,5 L4,5 L9,1 L9,15 L4,11 L1,11 Z" fill="#f0f0f0"/><path d="M11.5,4.5 C14,6 14,10 11.5,11.5" stroke="#f0f0f0" stroke-width="2.2" fill="none"/></svg>
<svg class="a" style="left:1038px;top:357px" width="17" height="23" viewBox="0 0 17 23"><path d="M2,1.5 L2,19 L6,15 L9,21 L11.5,20 L8.5,14 L14.5,14 Z" fill="#f4f4f4" stroke="#000" stroke-width="1.8" stroke-linejoin="miter"/></svg>
<!--FF_CONTENT-->
<!-- status -->
<div class="a" style="left:624px;top:673px;width:496px;height:24px;background:#edebe9;border-top:1px solid #d0cec9"></div>
<div class="t" style="left:633.0px;top:677px;color:#3c3c3c">Terminado</div>
<svg class="a" style="left:1106px;top:683px" width="12" height="12" viewBox="0 0 12 12"><g fill="#c4c2be"><rect x="9" y="1" width="2" height="2"/><rect x="6" y="4" width="2" height="2"/><rect x="9" y="4" width="2" height="2"/><rect x="3" y="7" width="2" height="2"/><rect x="6" y="7" width="2" height="2"/><rect x="9" y="7" width="2" height="2"/></g></svg>


<!-- BOTTOM PANEL -->
<div class="a" style="left:160px;top:697px;width:960px;height:23px;background:linear-gradient(#4c4b46,#36352f)"></div>
<div class="a" style="left:160px;top:696px;width:960px;height:1px;background:#2a2926"></div>
<div class="a" style="left:577px;top:697px;width:193px;height:23px;background:linear-gradient(#4e4d49,#44433f)"></div>
<div class="a" style="left:770px;top:697px;width:195px;height:23px;background:linear-gradient(#3a3935,#34332f)"></div>
<div class="a" style="left:965px;top:697px;width:20px;height:23px;background:linear-gradient(90deg,#4e4d49,#3e3d39)"></div>
<div class="a" style="left:1012px;top:697px;width:85px;height:23px;background:#34332f"></div>
<div class="a" style="left:1039px;top:699px;width:1px;height:21px;background:#46453f"></div>
<div class="a" style="left:1067px;top:699px;width:1px;height:21px;background:#46453f"></div>
<div class="a" style="left:384px;top:697px;width:1px;height:23px;background:#2c2b28"></div>
<div class="a" style="left:192px;top:697px;width:1px;height:23px;background:#2c2b28"></div>
<svg class="a" style="left:161px;top:699px" width="22" height="19" viewBox="0 0 22 19">
<defs><radialGradient id="sdg" cx="0.6" cy="0.55" r="0.6"><stop offset="0" stop-color="#e880d8"/><stop offset="1" stop-color="#9a30b0"/></radialGradient></defs>
<rect x="1" y="1" width="20" height="17" fill="url(#sdg)" stroke="#5a1a6a" stroke-width="0.8"/>
<rect x="1" y="1" width="20" height="3.5" fill="#f2eed8"/>
<rect x="2.5" y="7" width="3" height="3" fill="#f4e0f4"/><rect x="2.5" y="12" width="3" height="3" fill="#f4e0f4"/>
</svg>
<svg class="a" style="left:199px;top:702px" width="16" height="14" viewBox="0 0 16 14">
<path d="M0.5,1 L6,1 L7,2.5 L14,2.5 L14,13 L0.5,13 Z" fill="#d8d2c8"/>
<path d="M1.5,4 L15,4 L15,13 L1.5,13 Z" fill="#b0603a"/>
</svg>
<svg class="a" style="left:392px;top:702px" width="17" height="14" viewBox="0 0 17 14">
<defs><linearGradient id="fo2" x1="0" y1="0" x2="0" y2="1"><stop offset="0" stop-color="#f6b060"/><stop offset="1" stop-color="#e85a20"/></linearGradient></defs>
<path d="M0.5,1 L6,1 L7,2.5 L15,2.5 L15,13 L0.5,13 Z" fill="#f0ece4"/>
<path d="M1.5,4.5 L16,4.5 L16,13.5 L1.5,13.5 Z" fill="url(#fo2)"/>
</svg>
<svg class="a" style="left:584px;top:700px" width="17" height="17" viewBox="0 0 17 17">
<rect x="1" y="1.5" width="13" height="14" fill="#f4f4f0" stroke="#888" stroke-width="0.8"/>
<path d="M3,5 L11,5 M3,8 L11,8 M3,11 L9,11" stroke="#777" stroke-width="1"/>
<path d="M15.5,2 L8,10 L7,12 L9,11 L16.5,3.5" stroke="#333" stroke-width="1.6" fill="#ccc"/>
</svg>
<svg class="a" style="left:777px;top:700px" width="18" height="17" viewBox="0 0 23 22">
<defs><linearGradient id="fxg2" x1="0" y1="0" x2="1" y2="1"><stop offset="0" stop-color="#d84a0c"/><stop offset="0.6" stop-color="#ec6a10"/><stop offset="1" stop-color="#f4b028"/></linearGradient></defs>
<circle cx="11.5" cy="11" r="10" fill="url(#fxg2)"/>
<circle cx="13" cy="9.2" r="6.6" fill="#2a6cb8"/>
<circle cx="13.5" cy="7.2" r="3.8" fill="#6cc4ec" opacity="0.85"/>
<path d="M2.5,6 C1.5,12 4,19 11.5,20.5 C17,21 21,17 21.5,12 C19.5,16 15,17.5 11,16 C7,14.5 5.5,10.5 7.5,6 C6,7 5,8 4.5,9.5 C4,8 3.5,7 2.5,6 Z" fill="url(#fxg2)"/>
</svg>
<svg class="a" style="left:984px;top:698px" width="30" height="22" viewBox="0 0 30 22">
<rect x="1.5" y="1.5" width="27" height="20" fill="#ee6e3a" stroke="#f4f0ec" stroke-width="1.2"/>
<rect x="15" y="2" width="13" height="19" fill="#f7a688"/>
<rect x="14.2" y="2" width="1" height="19" fill="#f4f0ec"/>
</svg>
<svg class="a" style="left:1098px;top:698px" width="21" height="22" viewBox="0 0 21 22">
<defs><linearGradient id="tr" x1="0" y1="0" x2="1" y2="0"><stop offset="0" stop-color="#8a8a88"/><stop offset="0.5" stop-color="#e8e8e6"/><stop offset="1" stop-color="#9a9a98"/></linearGradient></defs>
<path d="M2,3 L19,3 L17,22 L4,22 Z" fill="url(#tr)"/>
<ellipse cx="10.5" cy="3" rx="8.5" ry="2.2" fill="#d8d8d6" stroke="#777" stroke-width="0.8"/>
<circle cx="8" cy="10" r="2.2" fill="#f4f4f2"/><circle cx="12" cy="15" r="2.5" fill="#f0f0ee"/>
</svg>
<!--BOTTOM_ICONS-->
<div class="t mt" style="left:221.0px;top:702px;letter-spacing:0.61px">[video]</div>
<div class="t mt" style="left:414.7px;top:702px;letter-spacing:-0.11px">imagenes</div>
<div class="t mt" style="left:608.0px;top:702px;letter-spacing:0.27px">multimedia.html (~/Es...</div>
<div class="t mt" style="left:801.0px;top:702px;letter-spacing:0.34px">Mozilla Firefox</div>
</body></html>
